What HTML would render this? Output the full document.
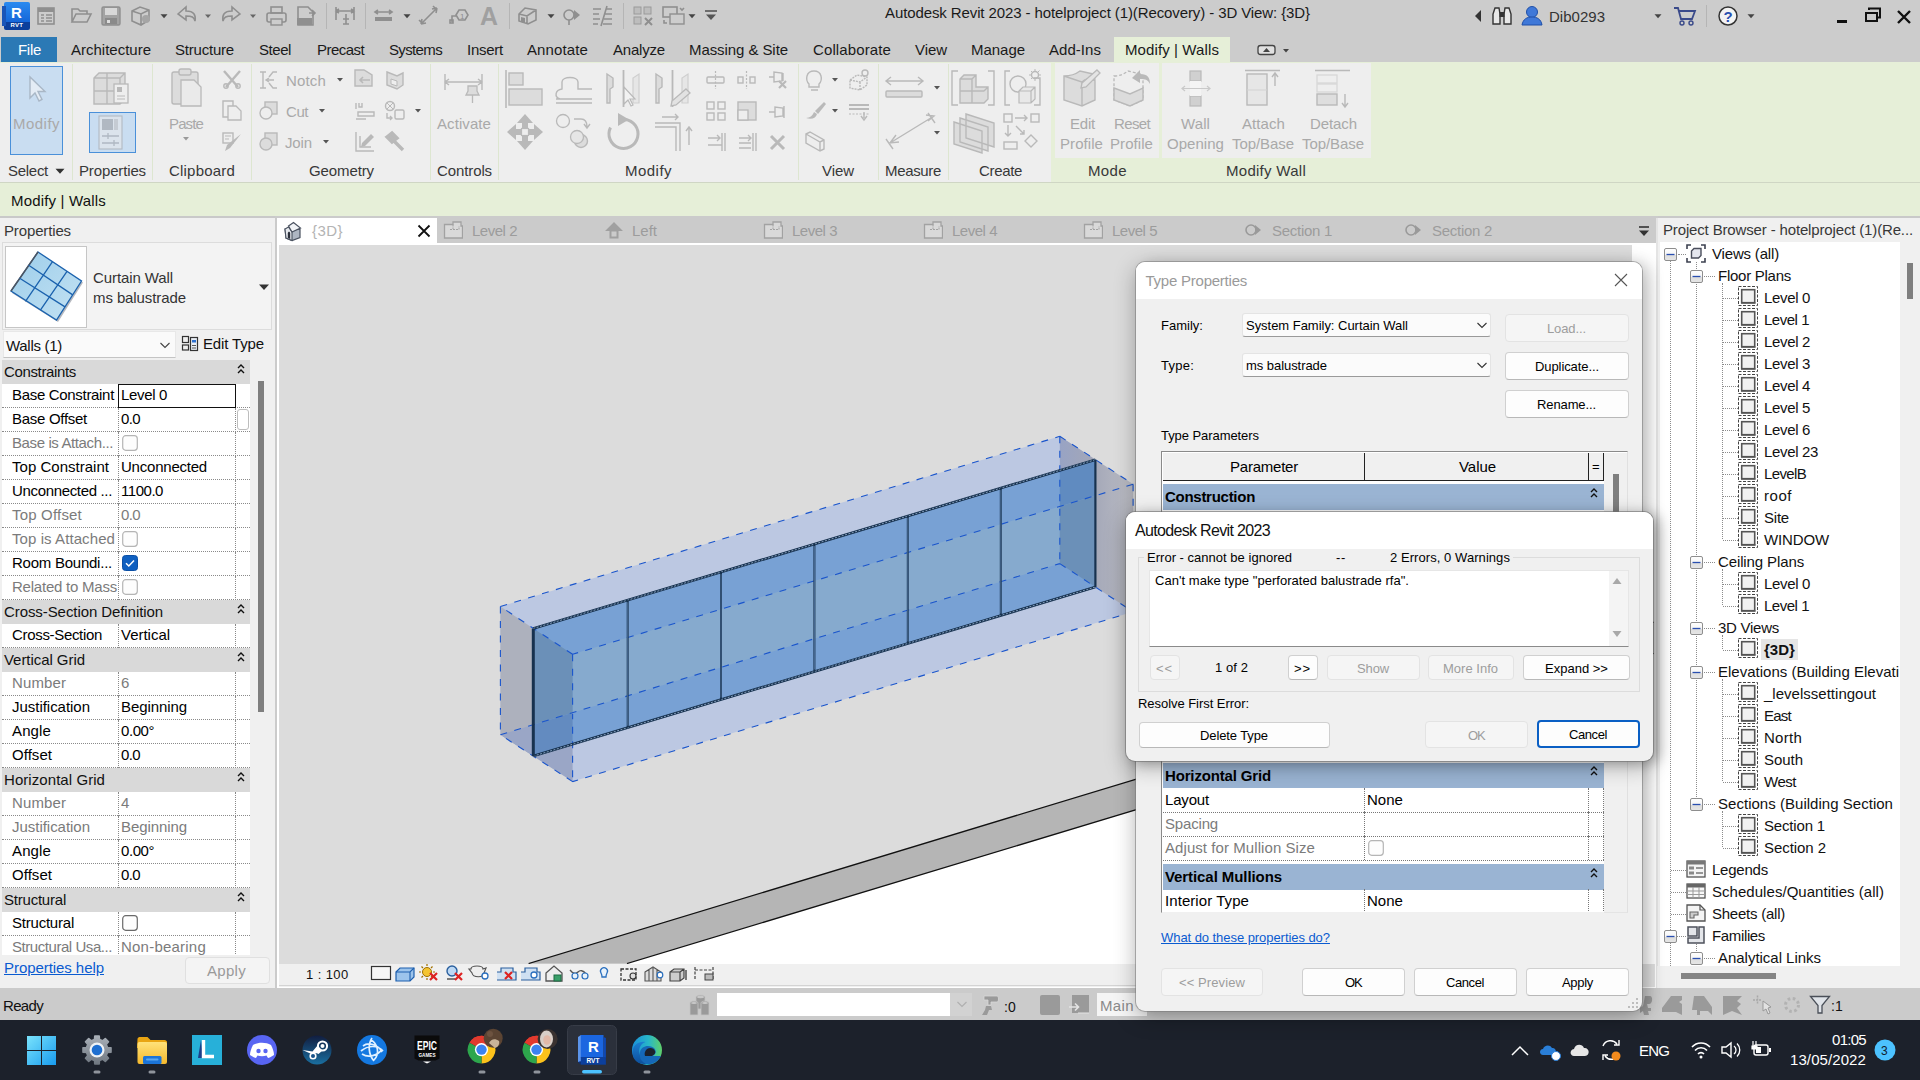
<!DOCTYPE html>
<html><head><meta charset="utf-8"><title>Autodesk Revit 2023</title>
<style>
html,body{margin:0;padding:0;}
body{width:1920px;height:1080px;overflow:hidden;position:relative;background:#cbcbcb;font-family:"Liberation Sans",sans-serif;}
.t{position:absolute;white-space:nowrap;font-family:"Liberation Sans",sans-serif;}
.r{position:absolute;display:block;}
</style></head><body>
<div class="r" style="left:0px;top:0px;width:1920px;height:62px;background:#cccccc;"></div>
<div class="r" style="left:4px;top:2px;width:26px;height:28px;background:linear-gradient(180deg,#2a8af0 0%,#1667d9 70%,#0c3f9c 71%,#0c3f9c 100%);border-radius:2px;"></div>
<div class="r" style="left:2px;top:6px;width:4px;height:20px;background:#1a55b8;"></div>
<span class="t" style="left:11px;top:1.5px;font-size:15px;line-height:21px;color:#fff;font-weight:bold;">R</span>
<span class="t" style="left:10.5px;top:19.0px;font-size:6px;line-height:12px;color:#fff;font-weight:bold;letter-spacing:0.3px;">RVT</span>
<svg class="r" style="left:0px;top:0px;" width="760" height="34" viewBox="0 0 760 34"><rect x="38" y="8" width="16" height="16" fill="none" stroke="#8f8f8f" stroke-width="1.6"/><rect x="38" y="8" width="16" height="4" fill="#8f8f8f"/><path d="M41 15h3M41 18h3M41 21h3M46 15h6M46 18h6M46 21h6" fill="none" stroke="#8f8f8f" stroke-width="1.6" stroke-width="1.2"/><path d="M72 22v-13h6l2 2h7v3M72 22l4-8h15l-4 8z" fill="none" stroke="#8f8f8f" stroke-width="1.6"/><rect x="102" y="7" width="18" height="18" rx="1.5" fill="#a3a3a3" stroke="#8f8f8f" stroke-width="1.4"/><rect x="105" y="8" width="12" height="7" fill="#d8d8d8"/><rect x="105" y="18" width="12" height="6" fill="#8a8a8a"/><rect x="107" y="20" width="3" height="3" fill="#ddd"/><path d="M132 11l8-4 9 3v10l-8 5-9-4z M132 11l9 3 8-4 M141 14v11" fill="none" stroke="#8f8f8f" stroke-width="1.6" stroke-width="1.3"/><circle cx="146" cy="19" r="4" fill="#a5a5a5"/><polygon points="160.5,14.25 167.5,14.25 164,18.25" fill="#444"/><path d="M178 14l8-7v4c8 0 10 4 9 10c-1-4-3-5-9-5v4z" fill="none" stroke="#8f8f8f" stroke-width="1.6" stroke-width="1.4"/><polygon points="205,14.5 211,14.5 208,18.0" fill="#666"/><path d="M240 14l-8-7v4c-8 0-10 4-9 10c1-4 3-5 9-5v4z" fill="none" stroke="#8f8f8f" stroke-width="1.6" stroke-width="1.4"/><polygon points="250,14.5 256,14.5 253,18.0" fill="#666"/><rect x="267" y="13" width="19" height="9" rx="2" fill="none" stroke="#8f8f8f" stroke-width="1.6"/><rect x="271" y="7" width="11" height="6" fill="none" stroke="#8f8f8f" stroke-width="1.6"/><rect x="271" y="19" width="11" height="6" fill="#cdcdcd" stroke="#8f8f8f" stroke-width="1.4"/><path d="M298 25v-18h10l5 5v13z" fill="none" stroke="#8f8f8f" stroke-width="1.6" stroke-width="1.4"/><rect x="297" y="18" width="15" height="7" fill="#8f8f8f"/><path d="M309 13h6m-3-3l3 3-3 3" fill="none" stroke="#8f8f8f" stroke-width="1.6" stroke-width="1.3"/><path d="M326.5 3v26" stroke="#b5b5b5" stroke-width="1"/><path d="M336 7v13M354 7v13M336 11h18M339 9l-3 2 3 2M351 9l3 2-3 2M346 14v10M343 24h6M343 19h6" fill="none" stroke="#8f8f8f" stroke-width="1.6" stroke-width="1.3"/><path d="M365.5 3v26" stroke="#b5b5b5" stroke-width="1"/><path d="M375 12h17M378 10l-3 2 3 2M389 10l3 2-3 2" fill="none" stroke="#8f8f8f" stroke-width="1.6" stroke-width="1.3"/><rect x="375" y="17" width="17" height="4" fill="#8f8f8f"/><polygon points="403.5,14.25 410.5,14.25 407,18.25" fill="#444"/><path d="M421 24l16-16M421 24l1-5M421 24l5-1M437 8l-5 1M437 8l-1 5M419 20l4 4M433 6l4 4" fill="none" stroke="#8f8f8f" stroke-width="1.6" stroke-width="1.3"/><path d="M452 22v-6h4" fill="none" stroke="#8f8f8f" stroke-width="1.6" stroke-width="1.3"/><rect x="450" y="20" width="3" height="3" fill="none" stroke="#8f8f8f" stroke-width="1.6" stroke-width="1"/><path d="M456 15l3-5h6l3 5-3 5h-6z" fill="none" stroke="#8f8f8f" stroke-width="1.6" stroke-width="1.3"/><text x="460" y="18.5" font-size="8" font-family="Liberation Sans" fill="#8f8f8f">1</text><text x="480" y="25" font-size="25" font-weight="bold" font-family="Liberation Sans" fill="#a0a0a0" textLength="18" lengthAdjust="spacingAndGlyphs">A</text><path d="M509.5 3v26" stroke="#b5b5b5" stroke-width="1"/><path d="M519 14l6-6 11 2 0 10-8 4-9-3z M519 14l8 2 9-6 M527 16v8" fill="none" stroke="#8f8f8f" stroke-width="1.6" stroke-width="1.4"/><path d="M521 17v5l4 1v-5z" fill="#8f8f8f"/><polygon points="547.5,14.25 554.5,14.25 551,18.25" fill="#444"/><circle cx="569" cy="15" r="5" fill="none" stroke="#8f8f8f" stroke-width="1.6" stroke-width="1.4"/><path d="M574 10l6 5-6 5z" fill="#8f8f8f"/><path d="M569 20v5" fill="none" stroke="#8f8f8f" stroke-width="1.6" stroke-width="1.3"/><path d="M593 9h8M593 14h6M593 19h7M593 24h5M606 9h6M605 14h7M604 19h8M603 24h9M607 6l-6 20" fill="none" stroke="#8f8f8f" stroke-width="1.6" stroke-width="1.6"/><path d="M623.5 3v26" stroke="#b5b5b5" stroke-width="1"/><rect x="634" y="7" width="7" height="7" fill="#bdbdbd" stroke="#9a9a9a" stroke-width="1"/><rect x="644" y="7" width="7" height="7" fill="#bdbdbd" stroke="#9a9a9a" stroke-width="1"/><rect x="634" y="17" width="7" height="7" fill="#bdbdbd" stroke="#9a9a9a" stroke-width="1"/><path d="M645 18l7 7M652 18l-7 7" stroke="#8f8f8f" stroke-width="2"/><rect x="663" y="7" width="14" height="10" fill="none" stroke="#8f8f8f" stroke-width="1.6" stroke-width="1.4"/><rect x="670" y="14" width="14" height="10" fill="#cdcdcd" stroke="#8f8f8f" stroke-width="1.4"/><path d="M664 20v3h3M680 8l2 2 2-2" fill="none" stroke="#8f8f8f" stroke-width="1.6" stroke-width="1.2"/><polygon points="688.5,14.25 695.5,14.25 692,18.25" fill="#444"/><path d="M705 11h12" stroke="#555" stroke-width="1.6"/><polygon points="706,14.5 716,14.5 711,20.0" fill="#555"/></svg>
<span class="t" style="left:885px;top:2.0px;font-size:15px;line-height:21px;color:#1a1a1a;letter-spacing:-0.104px;">Autodesk Revit 2023 - hotelproject (1)(Recovery) - 3D View: {3D}</span>
<svg class="r" style="left:0px;top:0px;" width="1920" height="34" viewBox="0 0 1920 34"><polygon points="1481,10 1481,22 1475,16" fill="#333"/><path d="M1493 24v-10l2-6h4l1 6v10zM1511 24v-10l-2-6h-4l-1 6v10z" fill="#e8e8e8" stroke="#333" stroke-width="1.4"/><rect x="1499.5" y="12" width="5" height="5" fill="#333"/><circle cx="1532" cy="12" r="5.5" fill="#3f78d8" stroke="#1f4fa8" stroke-width="1"/><path d="M1522 25c1-6 5-8 10-8s9 2 10 8z" fill="#3f78d8" stroke="#1f4fa8" stroke-width="1"/><polygon points="1654.5,14.25 1661.5,14.25 1658,18.25" fill="#444"/><path d="M1674 8h4l3 11h11l3-8h-16" fill="none" stroke="#3a4a8a" stroke-width="1.8"/><circle cx="1682" cy="23" r="2" fill="none" stroke="#3a4a8a" stroke-width="1.4"/><circle cx="1691" cy="23" r="2" fill="none" stroke="#3a4a8a" stroke-width="1.4"/><path d="M1706.5 5v22" stroke="#b5b5b5" stroke-width="1"/><circle cx="1728" cy="16" r="9" fill="#f4f4f4" stroke="#333" stroke-width="1.5"/><text x="1723.5" y="21.5" font-size="15" font-weight="bold" font-family="Liberation Sans" fill="#2b50b0">?</text><polygon points="1747.5,14.25 1754.5,14.25 1751,18.25" fill="#444"/><rect x="1837" y="20" width="10" height="3" fill="#111"/><path d="M1869 10v-1.5h11v9h-2" fill="none" stroke="#111" stroke-width="2"/><rect x="1866" y="13" width="11" height="8" fill="none" stroke="#111" stroke-width="2"/><path d="M1898 11l12 12M1910 11l-12 12" stroke="#111" stroke-width="2.4"/></svg>
<span class="t" style="left:1549px;top:5.5px;font-size:15px;line-height:21px;color:#333;letter-spacing:0.018px;">Dib0293</span>
<div class="r" style="left:1px;top:37px;width:56px;height:25px;background:#2b79b5;"></div>
<span class="t" style="left:18px;top:38.5px;font-size:15px;line-height:21px;color:#fff;letter-spacing:-0.289px;">File</span>
<span class="t" style="left:71px;top:38.5px;font-size:15px;line-height:21px;color:#1a1a1a;letter-spacing:-0.004px;">Architecture</span>
<span class="t" style="left:175px;top:38.5px;font-size:15px;line-height:21px;color:#1a1a1a;letter-spacing:-0.208px;">Structure</span>
<span class="t" style="left:259px;top:38.5px;font-size:15px;line-height:21px;color:#1a1a1a;letter-spacing:-0.438px;">Steel</span>
<span class="t" style="left:317px;top:38.5px;font-size:15px;line-height:21px;color:#1a1a1a;letter-spacing:-0.551px;">Precast</span>
<span class="t" style="left:389px;top:38.5px;font-size:15px;line-height:21px;color:#1a1a1a;letter-spacing:-0.645px;">Systems</span>
<span class="t" style="left:467px;top:38.5px;font-size:15px;line-height:21px;color:#1a1a1a;letter-spacing:-0.255px;">Insert</span>
<span class="t" style="left:527px;top:38.5px;font-size:15px;line-height:21px;color:#1a1a1a;letter-spacing:0.117px;">Annotate</span>
<span class="t" style="left:613px;top:38.5px;font-size:15px;line-height:21px;color:#1a1a1a;letter-spacing:-0.194px;">Analyze</span>
<span class="t" style="left:689px;top:38.5px;font-size:15px;line-height:21px;color:#1a1a1a;letter-spacing:-0.075px;">Massing &amp; Site</span>
<span class="t" style="left:813px;top:38.5px;font-size:15px;line-height:21px;color:#1a1a1a;letter-spacing:0.116px;">Collaborate</span>
<span class="t" style="left:915px;top:38.5px;font-size:15px;line-height:21px;color:#1a1a1a;letter-spacing:-0.059px;">View</span>
<span class="t" style="left:971px;top:38.5px;font-size:15px;line-height:21px;color:#1a1a1a;letter-spacing:-0.036px;">Manage</span>
<span class="t" style="left:1049px;top:38.5px;font-size:15px;line-height:21px;color:#1a1a1a;letter-spacing:0.042px;">Add-Ins</span>
<div class="r" style="left:1114px;top:37px;width:116px;height:25px;background:#e6efd8;"></div>
<span class="t" style="left:1125px;top:38.5px;font-size:15px;line-height:21px;color:#1a1a1a;letter-spacing:0.106px;">Modify | Walls</span>
<svg class="r" style="left:1255px;top:40px;" width="40" height="20" viewBox="0 0 40 20"><rect x="3" y="5.5" width="17" height="9" rx="2.5" fill="#e0e0e0" stroke="#444" stroke-width="1.3"/><polygon points="8,12 15,12 11.5,8" fill="#444"/><polygon points="28,9.0 34,9.0 31,12.5" fill="#444"/></svg>
<div class="r" style="left:0px;top:62px;width:1920px;height:121px;background:#e6efd8;"></div>
<div class="r" style="left:0px;top:63px;width:1051px;height:119px;background:#eeeeee;"></div>
<div class="r" style="left:1055px;top:63px;width:104px;height:95px;background:#eeeeee;"></div>
<div class="r" style="left:1162px;top:63px;width:209px;height:95px;background:#eeeeee;"></div>
<div class="r" style="left:0px;top:182px;width:1920px;height:1px;background:#cfd6c4;"></div>
<div class="r" style="left:0px;top:183px;width:1920px;height:33px;background:#e6efd8;"></div>
<div class="r" style="left:0px;top:216px;width:1920px;height:2px;background:#c9c9c9;"></div>
<span class="t" style="left:11px;top:190.0px;font-size:15px;line-height:21px;color:#111;letter-spacing:0.177px;">Modify | Walls</span>
<div class="r" style="left:72px;top:64px;width:1px;height:116px;background:#dde6d0;"></div>
<div class="r" style="left:152px;top:64px;width:1px;height:116px;background:#dde6d0;"></div>
<div class="r" style="left:251px;top:64px;width:1px;height:116px;background:#dde6d0;"></div>
<div class="r" style="left:430px;top:64px;width:1px;height:116px;background:#dde6d0;"></div>
<div class="r" style="left:498px;top:64px;width:1px;height:116px;background:#dde6d0;"></div>
<div class="r" style="left:798px;top:64px;width:1px;height:116px;background:#dde6d0;"></div>
<div class="r" style="left:878px;top:64px;width:1px;height:116px;background:#dde6d0;"></div>
<div class="r" style="left:948px;top:64px;width:1px;height:116px;background:#dde6d0;"></div>
<div class="r" style="left:10px;top:66px;width:53px;height:89px;background:#c9ddf1;border:1px solid #4a90d9;box-sizing:border-box;"></div>
<div class="r" style="left:89px;top:112px;width:47px;height:41px;background:#c9ddf1;border:1px solid #4a90d9;box-sizing:border-box;"></div>
<svg class="r" style="left:0px;top:62px;" width="1400" height="100" viewBox="0 62 1400 100"><path d="M30 77v21l5-5 4 8 3-1.5-4-8h7z" fill="#e4ecf5" stroke="#a9b7c6" stroke-width="1.4"/><path d="M94 78l5-5h26v26l-5 5h-26z M94 78h26v26 M120 78l5-5 M107 73v31 M94 91h31" fill="#dcdcdc" stroke="#b9b9b9" stroke-width="1.4" stroke-width="1.3"/><rect x="114" y="84" width="14" height="19" fill="#eee" stroke="#b9b9b9" stroke-width="1.3"/><rect x="117" y="87" width="5" height="5" fill="#b9b9b9"/><path d="M117 96h8M117 99h8" stroke="#b9b9b9" stroke-width="1.2"/><rect x="99" y="116" width="23" height="33" fill="#dbe3ec" stroke="#b4bcc6" stroke-width="1.2"/><rect x="102" y="119" width="11" height="11" fill="#b0b8c2"/><rect x="114" y="119" width="4" height="11" fill="#c5cbd3"/><path d="M102 136h17M102 143h17M108 133v6M114 140v6" stroke="#b0b8c2" stroke-width="1.3"/><rect x="172" y="72" width="26" height="32" rx="2" fill="#dcdcdc" stroke="#b9b9b9" stroke-width="1.4"/><rect x="179" y="69" width="12" height="6" rx="2" fill="#dcdcdc" stroke="#b9b9b9" stroke-width="1.4"/><path d="M181 80h13l7 7v19h-20z" fill="#eaeaea" stroke="#b9b9b9" stroke-width="1.3"/><polygon points="183,137.0 189,137.0 186,140.5" fill="#9a9a9a"/><path d="M224 71l14 16M240 71l-14 16" stroke="#b9b9b9" stroke-width="2.4"/><circle cx="226" cy="86" r="2.2" fill="none" stroke="#b9b9b9" stroke-width="1.4"/><circle cx="238" cy="86" r="2.2" fill="none" stroke="#b9b9b9" stroke-width="1.4"/><path d="M223 101h10v16h-10z" fill="none" stroke="#b9b9b9" stroke-width="1.4"/><path d="M228 106h8l5 5v9h-13z" fill="#eee" stroke="#b9b9b9" stroke-width="1.3"/><rect x="223" y="133" width="10" height="10" fill="none" stroke="#b9b9b9" stroke-width="1.4"/><path d="M225 136h6M225 139h4" stroke="#b9b9b9" stroke-width="1"/><path d="M241 134l-11 14-5 3 2-6z" fill="#b9b9b9"/><path d="M260 72h6M260 88h6M263 72v16M277 72h-4l-4 5M277 88h-4l-4-5M266 80h8M269 78l-3 2 3 2" fill="none" stroke="#b9b9b9" stroke-width="1.4" stroke-width="1.6"/><polygon points="337,78.0 343,78.0 340,81.5" fill="#555"/><rect x="265" y="102" width="12" height="12" fill="#dcdcdc" stroke="#b9b9b9" stroke-width="1.4"/><circle cx="266" cy="113" r="6" fill="#eee" stroke="#b9b9b9" stroke-width="1.4"/><polygon points="319,109.0 325,109.0 322,112.5" fill="#555"/><rect x="265" y="133" width="12" height="12" fill="#dcdcdc" stroke="#b9b9b9" stroke-width="1.4"/><circle cx="266" cy="144" r="6" fill="#dcdcdc" stroke="#b9b9b9" stroke-width="1.4"/><polygon points="323,140.0 329,140.0 326,143.5" fill="#555"/><path d="M355 70h9l8 5v11l-8 0h-9z" fill="#dcdcdc" stroke="#b9b9b9" stroke-width="1.4"/><path d="M360 80h10M363 77l-3 3 3 3" stroke="#b9b9b9" stroke-width="1.6" fill="none"/><path d="M387 72l10 4 6-3v12l-6 4-10-4z" fill="#dcdcdc" stroke="#b9b9b9" stroke-width="1.4"/><path d="M391 79l6 2v5l-6-2z" fill="#eee" stroke="#b9b9b9" stroke-width="1"/><path d="M356 103v6M359 103v4h3v-4M358 112h16v4h-16zM356 119h10" fill="none" stroke="#b9b9b9" stroke-width="1.4" stroke-width="1.2"/><circle cx="390" cy="106" r="4.5" fill="none" stroke="#b9b9b9" stroke-width="1.4"/><path d="M387 103l6 6M393 103l-6 6" stroke="#b9b9b9" stroke-width="1"/><rect x="395" y="110" width="9" height="9" rx="1.5" fill="none" stroke="#b9b9b9" stroke-width="1.4"/><path d="M387 113v5h5m-2-2l2 2-2 2" fill="none" stroke="#b9b9b9" stroke-width="1.4" stroke-width="1.2"/><polygon points="415,109.0 421,109.0 418,112.5" fill="#555"/><path d="M356 132v19h18M360 136v11h11" fill="none" stroke="#b9b9b9" stroke-width="1.4"/><path d="M371 134l3 3-9 9-4 1 1-4z" fill="#b9b9b9"/><path d="M387 137l5-4 5 5-5 4z M393 140l10 10" stroke="#b9b9b9" stroke-width="3.4" fill="#b9b9b9"/><path d="M445 74v16M482 74v16M445 82h37M449 79l-4 3 4 3M478 79l4 3-4 3" fill="none" stroke="#b9b9b9" stroke-width="1.4"/><path d="M468 86h9v5l2 4h-13l2-4z M472.5 95v8" fill="#dcdcdc" stroke="#b9b9b9" stroke-width="1.3"/><path d="M506 70v38" stroke="#b9b9b9" stroke-width="1.6"/><rect x="509" y="73" width="14" height="12" fill="#dcdcdc" stroke="#b9b9b9" stroke-width="1.4"/><rect x="509" y="89" width="33" height="16" fill="#dcdcdc" stroke="#b9b9b9" stroke-width="1.4"/><path d="M556 103h36M556 99h36M560 99c-6-2-5-9 2-10v-7c0-6 16-6 16 0v7h14" fill="none" stroke="#b9b9b9" stroke-width="1.4" stroke-width="1.6"/><path d="M623.5 70v37" stroke="#b9b9b9" stroke-width="1.8"/><path d="M607 103v-29l6 4v9l-3 2v14z" fill="#dcdcdc" stroke="#b9b9b9" stroke-width="1.4"/><path d="M639 103v-29l-6 4v25z" fill="#e6e6e6" stroke="#cfcfcf" stroke-width="1.2"/><path d="M624 87v17l4-4 3 6 2-1-3-6h5z" fill="#f2f2f2" stroke="#b9b9b9" stroke-width="1.2"/><path d="M672.500 70v37" stroke="#b9b9b9" stroke-width="1.8"/><path d="M656 103v-29l6 4v9l-3 2v14z" fill="#dcdcdc" stroke="#b9b9b9" stroke-width="1.4"/><path d="M688 103v-29l-6 4v25z" fill="#e6e6e6" stroke="#cfcfcf" stroke-width="1.2"/><path d="M686 89l4 4-14 12-5 1 1-5z" fill="#e2e2e2" stroke="#b9b9b9" stroke-width="1.3"/><path d="M525 114l8 9h-5v5h-6v-5h-5z M525 150l8-9h-5v-5h-6v5h-5z M507 132l9-8v5h5v6h-5v5z M543 132l-9-8v5h-5v6h5v5z" fill="#b9b9b9"/><rect x="521.5" y="128.500" width="7" height="7" fill="#eee" stroke="#b9b9b9" stroke-width="1.2"/><circle cx="563" cy="121" r="6.500" fill="#eee" stroke="#b9b9b9" stroke-width="1.3"/><circle cx="581" cy="141" r="6.500" fill="#dcdcdc" stroke="#b9b9b9" stroke-width="1.4"/><circle cx="577" cy="137" r="6.500" fill="#e6e6e6" stroke="#b9b9b9" stroke-width="1.3"/><path d="M574 119h7c4 0 6 3 6 8m-3-3l3 4 3-4" fill="none" stroke="#b9b9b9" stroke-width="1.4" stroke-width="1.6"/><path d="M625 119.500A14.500 14.500 0 1 1 610.500 127.500" fill="none" stroke="#b9b9b9" stroke-width="3"/><path d="M618 113l11 6.500-11 6.500z" fill="#b9b9b9"/><path d="M655 123h25v28M655 127h21v24M662 117h16m-3-3l3 3-3 3M689 145v-17m-3 3l3-4 3 4" fill="none" stroke="#b9b9b9" stroke-width="1.4" stroke-width="1.5"/><rect x="707" y="77" width="17" height="6" rx="1" fill="none" stroke="#b9b9b9" stroke-width="1.4" stroke-width="1.3"/><path d="M715.500 71v18" stroke="#b9b9b9" stroke-width="1.2" stroke-dasharray="2 1.500"/><rect x="738" y="77" width="5" height="6" fill="none" stroke="#b9b9b9" stroke-width="1.4" stroke-width="1.3"/><rect x="750" y="77" width="5" height="6" fill="none" stroke="#b9b9b9" stroke-width="1.4" stroke-width="1.3"/><path d="M746.500 71v18" stroke="#b9b9b9" stroke-width="1.2" stroke-dasharray="2 1.500"/><path d="M769 77h5M774 72v10l8-1v-8z M783 73v8" fill="none" stroke="#b9b9b9" stroke-width="1.4" stroke-width="1.3"/><path d="M779 81l7 7M786 81l-7 7" stroke="#b9b9b9" stroke-width="2.2"/><rect x="707" y="102" width="7" height="7" fill="none" stroke="#b9b9b9" stroke-width="1.4" stroke-width="1.3"/><rect x="718" y="102" width="7" height="7" fill="none" stroke="#b9b9b9" stroke-width="1.4" stroke-width="1.3"/><rect x="707" y="113" width="7" height="7" fill="none" stroke="#b9b9b9" stroke-width="1.4" stroke-width="1.3"/><rect x="718" y="113" width="7" height="7" fill="none" stroke="#b9b9b9" stroke-width="1.4" stroke-width="1.3"/><rect x="738" y="102" width="18" height="18" fill="#dcdcdc" stroke="#b9b9b9" stroke-width="1.4" stroke-width="1.3"/><rect x="738" y="110" width="10" height="10" fill="#eee" stroke="#b9b9b9" stroke-width="1.3"/><path d="M769 112h6M775 107v10l8-1v-8z M784 106v12" fill="none" stroke="#b9b9b9" stroke-width="1.4" stroke-width="1.3"/><path d="M708 138h12m-3-3l3 3-3 3M708 145h14M722 133v18M725 133v18" fill="none" stroke="#b9b9b9" stroke-width="1.4" stroke-width="1.3"/><path d="M739 138h12m-3-3l3 3-3 3M739 143h12M739 148h12M753 133v18M756 133v18" fill="none" stroke="#b9b9b9" stroke-width="1.4" stroke-width="1.3"/><path d="M771 136l13 13M784 136l-13 13" stroke="#b9b9b9" stroke-width="3"/><path d="M809 84c-4-4-3-13 5-13s9 9 5 13v3h-10z M811 90h7" fill="none" stroke="#b9b9b9" stroke-width="1.4" stroke-width="1.3"/><polygon points="832,78.0 838,78.0 835,81.5" fill="#555"/><path d="M850 80l7-5 10 2v8l-7 5-10-2z M850 80l10 2 7-5 M860 82v8" fill="none" stroke="#b9b9b9" stroke-width="1.4" stroke-width="1.2" stroke-dasharray="2 1"/><circle cx="865" cy="73" r="3" fill="none" stroke="#b9b9b9" stroke-width="1.4" stroke-width="1.2"/><path d="M806 118c4 0 7-3 8-6l3 2c-1 4-5 6-11 4z" fill="#b9b9b9"/><path d="M815 111l9-9 2 2-8 10z" fill="#b9b9b9"/><polygon points="832,109.0 838,109.0 835,112.5" fill="#555"/><path d="M849 105h20M849 109h20" stroke="#b9b9b9" stroke-width="2"/><path d="M849 114h20" stroke="#b9b9b9" stroke-width="1.2" stroke-dasharray="2 1.500"/><path d="M864 112v6m-3-2l3 4 3-4" fill="none" stroke="#b9b9b9" stroke-width="1.4" stroke-width="1.5"/><path d="M806 134l4-2 14 8v9l-4 2-14-8z M806 134l14 8 4-2 M820 142v9" fill="none" stroke="#b9b9b9" stroke-width="1.4" stroke-width="1.3"/><path d="M887 81h35M891 77l-5 4 5 4M918 77l5 4-5 4" fill="none" stroke="#b9b9b9" stroke-width="1.4" stroke-width="1.4"/><rect x="886" y="91" width="36" height="6" rx="1" fill="#dcdcdc" stroke="#b9b9b9" stroke-width="1.4" stroke-width="1.2"/><polygon points="934,86.0 940,86.0 937,89.5" fill="#555"/><path d="M890 143l44-27M886 139l7 10M928 113l7 10M896 135l-6 8 9-1M928 121l6-5-8-1" fill="none" stroke="#b9b9b9" stroke-width="1.4" stroke-width="1.4"/><polygon points="934,131.0 940,131.0 937,134.5" fill="#555"/><path d="M958 71h-6v34h6M988 71h6v34h-6" fill="none" stroke="#b9b9b9" stroke-width="1.4" stroke-width="1.4"/><path d="M960 79l4-4h12v12h12v12l-4 4h-24z M960 79h12v24M972 91h12M972 79l4-4M984 91l4-4M960 91h12" fill="#dcdcdc" stroke="#b9b9b9" stroke-width="1.4" stroke-width="1.2"/><path d="M1010 71h-5v34h5M1034 78h6v27h-6" fill="none" stroke="#b9b9b9" stroke-width="1.4" stroke-width="1.4"/><circle cx="1018" cy="84" r="8" fill="none" stroke="#b9b9b9" stroke-width="1.4" stroke-width="1.3"/><path d="M1019 91l4-4h12v12l-4 4h-12z M1019 91h12v12M1031 91l4-4" fill="#e8e8e8" stroke="#b9b9b9" stroke-width="1.2"/><circle cx="1035" cy="75" r="3.500" fill="none" stroke="#b9b9b9" stroke-width="1.4" stroke-width="1.2"/><path d="M1035 69v2M1035 79v2M1029 75h2M1039 75h2M1031 71l1.5 1.500M1038 78l1.500 1.500M1031 79l1.500-1.500M1038 72l1.500-1.500" stroke="#b9b9b9" stroke-width="1"/><path d="M966 114l28 9v24l-28-9z M960 118l28 9v24l-28-9z M954 122l28 9v22l-28-9z" fill="#dcdcdc" stroke="#b9b9b9" stroke-width="1.4" stroke-width="1.2"/><rect x="1004" y="114" width="8" height="8" fill="none" stroke="#b9b9b9" stroke-width="1.4" stroke-width="1.2"/><rect x="1031" y="114" width="8" height="8" fill="none" stroke="#b9b9b9" stroke-width="1.4" stroke-width="1.2"/><rect x="1004" y="142" width="13" height="7" fill="none" stroke="#b9b9b9" stroke-width="1.4" stroke-width="1.2"/><path d="M1031 135l6 6-6 6-6-6z" fill="none" stroke="#b9b9b9" stroke-width="1.4" stroke-width="1.2"/><path d="M1015 118h12m-3-3l3 3-3 3M1008 125v11m-3-3l3 3 3-3M1016 126l8 8m0-4v4h-4" fill="none" stroke="#b9b9b9" stroke-width="1.4" stroke-width="1.3"/><path d="M1064 76c8 0 12-2 16-5l13 3c2 2 2 6 2 8v18l-13 6-18-6z M1064 76l18 6c0 8 0 16 0 24 M1082 82c3-3 8-5 13-1" fill="#dcdcdc" stroke="#b9b9b9" stroke-width="1.4" stroke-width="1.3"/><path d="M1097 70l3 3-14 14-5 1 1-5z" fill="#e4e4e4" stroke="#b9b9b9" stroke-width="1.3"/><path d="M1114 76c6 0 10-2 14-5l13 3c2 2 2 6 2 8v18l-13 6-16-6z" fill="none" stroke="#b9b9b9" stroke-width="1.3" stroke-dasharray="3 2"/><path d="M1114 88l16 6 13-6v12l-13 6-16-6z" fill="#dcdcdc" stroke="#b9b9b9" stroke-width="1.4" stroke-width="1.2"/><path d="M1132 78l8-8v4c8 0 10 4 10 10c-2-4-4-5-10-5v4z" fill="#b9b9b9"/><rect x="1190" y="71" width="11" height="10" fill="#d0d0d0" stroke="#b9b9b9" stroke-width="1.2"/><rect x="1190" y="96" width="11" height="10" fill="#d0d0d0" stroke="#b9b9b9" stroke-width="1.2"/><rect x="1190" y="81" width="11" height="15" fill="#f4f4f4"/><path d="M1182 88.500h28M1185 86l-3 2.500 3 2.500M1207 86l3 2.500-3 2.500" stroke="#c9c9c9" stroke-width="1.2" fill="none"/><path d="M1245 70.500h35" stroke="#b9b9b9" stroke-width="1.6"/><rect x="1247" y="74" width="20" height="31" fill="#e6e6e6" stroke="#b9b9b9" stroke-width="1.4"/><path d="M1247 90h20" stroke="#d2d2d2" stroke-width="1"/><path d="M1275 86v-12m-3 3l3-4 3 4" fill="none" stroke="#b9b9b9" stroke-width="1.4" stroke-width="1.5"/><path d="M1315 70.500h35" stroke="#b9b9b9" stroke-width="1.6"/><rect x="1317" y="75" width="20" height="8" fill="none" stroke="#d6d6d6" stroke-width="1.2"/><rect x="1317" y="84" width="20" height="8" fill="none" stroke="#d6d6d6" stroke-width="1.2"/><rect x="1317" y="94" width="20" height="11" fill="#dedede" stroke="#b9b9b9" stroke-width="1.4"/><path d="M1345 94v12m-3-3l3 4 3-4" fill="none" stroke="#b9b9b9" stroke-width="1.4" stroke-width="1.5"/></svg>
<span class="t" style="left:13px;top:112.5px;font-size:15px;line-height:21px;color:#a9a9a9;letter-spacing:0.469px;">Modify</span>
<span class="t" style="left:169px;top:112.5px;font-size:15px;line-height:21px;color:#a9a9a9;letter-spacing:-0.872px;">Paste</span>
<span class="t" style="left:286px;top:69.5px;font-size:15px;line-height:21px;color:#a9a9a9;letter-spacing:0.163px;">Notch</span>
<span class="t" style="left:286px;top:100.5px;font-size:15px;line-height:21px;color:#a9a9a9;letter-spacing:-0.448px;">Cut</span>
<span class="t" style="left:285px;top:131.5px;font-size:15px;line-height:21px;color:#a9a9a9;letter-spacing:-0.129px;">Join</span>
<span class="t" style="left:437px;top:112.5px;font-size:15px;line-height:21px;color:#a9a9a9;letter-spacing:0.080px;">Activate</span>
<span class="t" style="left:1070px;top:112.5px;font-size:15px;line-height:21px;color:#a9a9a9;letter-spacing:-0.211px;">Edit</span>
<span class="t" style="left:1060px;top:132.5px;font-size:15px;line-height:21px;color:#a9a9a9;letter-spacing:0.069px;">Profile</span>
<span class="t" style="left:1114px;top:112.5px;font-size:15px;line-height:21px;color:#a9a9a9;letter-spacing:-0.637px;">Reset</span>
<span class="t" style="left:1110px;top:132.5px;font-size:15px;line-height:21px;color:#a9a9a9;letter-spacing:0.069px;">Profile</span>
<span class="t" style="left:1181px;top:112.5px;font-size:15px;line-height:21px;color:#a9a9a9;letter-spacing:0.102px;">Wall</span>
<span class="t" style="left:1167px;top:132.5px;font-size:15px;line-height:21px;color:#a9a9a9;letter-spacing:0.040px;">Opening</span>
<span class="t" style="left:1242px;top:112.5px;font-size:15px;line-height:21px;color:#a9a9a9;letter-spacing:0.078px;">Attach</span>
<span class="t" style="left:1232px;top:132.5px;font-size:15px;line-height:21px;color:#a9a9a9;letter-spacing:-0.068px;">Top/Base</span>
<span class="t" style="left:1310px;top:112.5px;font-size:15px;line-height:21px;color:#a9a9a9;letter-spacing:-0.089px;">Detach</span>
<span class="t" style="left:1302px;top:132.5px;font-size:15px;line-height:21px;color:#a9a9a9;letter-spacing:-0.068px;">Top/Base</span>
<span class="t" style="left:8px;top:160.0px;font-size:15px;line-height:21px;color:#383838;letter-spacing:-0.281px;">Select</span>
<svg class="r" style="left:52px;top:165px;" width="16" height="12" viewBox="0 0 16 12"><polygon points="3.5,3.75 12.5,3.75 8,8.75" fill="#333"/></svg>
<span class="t" style="left:79px;top:160.0px;font-size:15px;line-height:21px;color:#383838;letter-spacing:-0.138px;">Properties</span>
<span class="t" style="left:169px;top:160.0px;font-size:15px;line-height:21px;color:#383838;letter-spacing:0.200px;">Clipboard</span>
<span class="t" style="left:309px;top:160.0px;font-size:15px;line-height:21px;color:#383838;letter-spacing:-0.109px;">Geometry</span>
<span class="t" style="left:437px;top:160.0px;font-size:15px;line-height:21px;color:#383838;letter-spacing:-0.107px;">Controls</span>
<span class="t" style="left:625px;top:160.0px;font-size:15px;line-height:21px;color:#383838;letter-spacing:0.469px;">Modify</span>
<span class="t" style="left:822px;top:160.0px;font-size:15px;line-height:21px;color:#383838;letter-spacing:-0.059px;">View</span>
<span class="t" style="left:885px;top:160.0px;font-size:15px;line-height:21px;color:#383838;letter-spacing:-0.339px;">Measure</span>
<span class="t" style="left:979px;top:160.0px;font-size:15px;line-height:21px;color:#383838;letter-spacing:-0.339px;">Create</span>
<span class="t" style="left:1088px;top:160.0px;font-size:15px;line-height:21px;color:#383838;letter-spacing:0.367px;">Mode</span>
<span class="t" style="left:1226px;top:160.0px;font-size:15px;line-height:21px;color:#383838;letter-spacing:0.277px;">Modify Wall</span>
<div class="r" style="left:275px;top:216px;width:1383px;height:772px;background:#cbcbcb;"></div>
<div class="r" style="left:277px;top:243px;width:1379px;height:745px;background:#ffffff;"></div>
<div class="r" style="left:277px;top:218px;width:160px;height:27px;background:#ffffff;"></div>
<svg class="r" style="left:282px;top:220px;" width="22" height="22" viewBox="0 0 22 22"><path d="M3 9l1 9 6 2.500 8-3v-8z" fill="#aeb6c2" stroke="#4a5260" stroke-width="1.200"/><path d="M3 9l1 9 6 2.500v-8.500l-3.500-5z" fill="#e6e9ee" stroke="#4a5260" stroke-width="1.100"/><path d="M6.500 6l5-3.500 7 5.500-8.500 4z" fill="#f1f3f6" stroke="#4a5260" stroke-width="1.200"/><path d="M5.800 13.500c0-2.500 2.400-2.500 2.400 0v5.500l-2.400-1z" fill="#2a2f3a"/></svg>
<span class="t" style="left:312px;top:220.0px;font-size:15px;line-height:21px;color:#b4b4b4;letter-spacing:0.449px;">{3D}</span>
<svg class="r" style="left:416px;top:223px;" width="16" height="16" viewBox="0 0 16 16"><path d="M2.500 2.500l11 11M13.500 2.500l-11 11" stroke="#111" stroke-width="1.8"/></svg>
<svg class="r" style="left:443px;top:220px;" width="20" height="20" viewBox="0 0 20 20"><path d="M1.500 4.500h8.500v-2.500h8v4h1.500v12h-18z" fill="#d9d9d9" stroke="#a2a2a2" stroke-width="1.300"/><path d="M10 4.500v4.500M7 9.500h9M16 9.500v-3.500" stroke="#a2a2a2" stroke-width="1" stroke-dasharray="2 1" fill="none"/></svg>
<span class="t" style="left:472px;top:220.0px;font-size:15px;line-height:21px;color:#9c9c9c;letter-spacing:-0.482px;">Level 2</span>
<svg class="r" style="left:604px;top:220px;" width="20" height="20" viewBox="0 0 20 20"><path d="M10 2l9 9h-4.500v7.500h-9v-7.500h-4.500z" fill="#a0a0a0"/><rect x="7.500" y="11.500" width="5" height="5" fill="#cbcbcb"/></svg>
<span class="t" style="left:632px;top:220.0px;font-size:15px;line-height:21px;color:#9c9c9c;letter-spacing:-0.008px;">Left</span>
<svg class="r" style="left:763px;top:220px;" width="20" height="20" viewBox="0 0 20 20"><path d="M1.500 4.500h8.500v-2.500h8v4h1.500v12h-18z" fill="#d9d9d9" stroke="#a2a2a2" stroke-width="1.300"/><path d="M10 4.500v4.500M7 9.500h9M16 9.500v-3.500" stroke="#a2a2a2" stroke-width="1" stroke-dasharray="2 1" fill="none"/></svg>
<span class="t" style="left:792px;top:220.0px;font-size:15px;line-height:21px;color:#9c9c9c;letter-spacing:-0.482px;">Level 3</span>
<svg class="r" style="left:923px;top:220px;" width="20" height="20" viewBox="0 0 20 20"><path d="M1.500 4.500h8.500v-2.500h8v4h1.500v12h-18z" fill="#d9d9d9" stroke="#a2a2a2" stroke-width="1.300"/><path d="M10 4.500v4.500M7 9.500h9M16 9.500v-3.500" stroke="#a2a2a2" stroke-width="1" stroke-dasharray="2 1" fill="none"/></svg>
<span class="t" style="left:952px;top:220.0px;font-size:15px;line-height:21px;color:#9c9c9c;letter-spacing:-0.482px;">Level 4</span>
<svg class="r" style="left:1083px;top:220px;" width="20" height="20" viewBox="0 0 20 20"><path d="M1.500 4.500h8.500v-2.500h8v4h1.500v12h-18z" fill="#d9d9d9" stroke="#a2a2a2" stroke-width="1.300"/><path d="M10 4.500v4.500M7 9.500h9M16 9.500v-3.500" stroke="#a2a2a2" stroke-width="1" stroke-dasharray="2 1" fill="none"/></svg>
<span class="t" style="left:1112px;top:220.0px;font-size:15px;line-height:21px;color:#9c9c9c;letter-spacing:-0.482px;">Level 5</span>
<svg class="r" style="left:1243px;top:220px;" width="20" height="20" viewBox="0 0 20 20"><circle cx="8" cy="10" r="5" fill="none" stroke="#9a9a9a" stroke-width="1.6"/><path d="M12 5l6 5-6 5z" fill="#9a9a9a"/></svg>
<span class="t" style="left:1272px;top:220.0px;font-size:15px;line-height:21px;color:#9c9c9c;letter-spacing:-0.283px;">Section 1</span>
<svg class="r" style="left:1403px;top:220px;" width="20" height="20" viewBox="0 0 20 20"><circle cx="8" cy="10" r="5" fill="none" stroke="#9a9a9a" stroke-width="1.6"/><path d="M12 5l6 5-6 5z" fill="#9a9a9a"/></svg>
<span class="t" style="left:1432px;top:220.0px;font-size:15px;line-height:21px;color:#9c9c9c;letter-spacing:-0.283px;">Section 2</span>
<svg class="r" style="left:1637px;top:224px;" width="14" height="14" viewBox="0 0 14 14"><path d="M2 3h10" stroke="#333" stroke-width="1.600"/><polygon points="2,6.500 12,6.500 7,12" fill="#333"/></svg>
<svg class="r" style="left:279px;top:245px" width="1375" height="719" viewBox="279 245 1375 719"><rect x="279" y="245" width="1376" height="719" fill="#dcdcdc"/><rect x="1632" y="245" width="24" height="719" fill="#ffffff"/><polygon points="627.0,963.5 1660.0,651.5 1660.0,975.0 627.0,975.0" fill="#ffffff"/><polygon points="528.6,963.5 1660.0,620.3 1660.0,651.5 627.0,963.5" fill="#b5b5b5"/><path d="M528.6 963.5L1660 620.3M627 963.5L1660 651.5" stroke="#111" stroke-width="1.300"/><polygon points="500.4,606.5 1059.8,436.3 1133.1,484.2 1133.1,611.8 572.6,781.6 500.4,734.8" fill="#bcc8e2"/><polygon points="500.4,606.5 533.3,628.5 533.3,756.1 500.4,734.8" fill="#adb1bd"/><defs><linearGradient id="rf" x1="0" y1="0" x2="1" y2="0"><stop offset="0" stop-color="#98a3c4"/><stop offset="0.45" stop-color="#a3a7b8"/><stop offset="1" stop-color="#bcbdc4"/></linearGradient></defs><polygon points="1059.8,436.3 1133.1,484.2 1133.1,611.8 1059.8,563.6" fill="url(#rf)"/><polygon points="500.4,734.8 533.3,724.7 533.3,756.1 572.6,744.3 572.6,781.6" fill="#9aa6c6"/><polygon points="533.3,628.5 1095.4,459.7 1095.4,587.0 533.3,756.1" fill="#78a1d4"/><polygon points="572.6,654.3 1059.8,506.4 1059.8,563.6 572.6,712.7" fill="#86aace"/><polygon points="533.3,628.5 572.6,654.3 572.6,712.7 533.3,724.7" fill="#6b90b8"/><polygon points="533.3,724.7 572.6,712.7 572.6,744.3 533.3,756.1" fill="#638bc0"/><polygon points="1059.8,470.4 1095.4,459.7 1095.4,495.6 1059.8,506.4" fill="#608bc0"/><polygon points="1059.8,506.4 1095.4,495.6 1095.4,587.0 1059.8,563.6" fill="#6b90b8"/><path d="M500.4 606.5L1059.8 436.3M1059.8 436.3L1133.1 484.2M1133.1 484.2L572.6 654.3M572.6 654.3L500.4 606.5M500.4 734.8L1059.8 563.6M1059.8 563.6L1133.1 611.8M1133.1 611.8L572.6 781.6M572.6 781.6L500.4 734.8M500.4 606.5L500.4 734.8M1059.8 436.3L1059.8 563.6M1133.1 484.2L1133.1 611.8M572.6 654.3L572.6 781.6" stroke="#1a55cc" stroke-width="1.100" stroke-dasharray="7 7.500" fill="none"/><path d="M533.3 628.5L1095.4 459.7M533.3 756.1L1095.4 587.0" stroke="#17324f" stroke-width="2.600" fill="none"/><path d="M533.3 628.5L1095.4 459.7M533.3 756.1L1095.4 587.0" stroke="#9fb9d8" stroke-width="0.800" stroke-dasharray="2 1.500" fill="none"/><path d="M533.3 628.5L533.3 756.1" stroke="#17324f" stroke-width="3" fill="none"/><path d="M1095.4 459.7L1095.4 587.0" stroke="#17324f" stroke-width="2.200" fill="none"/><path d="M627.7 600.2V727.7" stroke="#17324f" stroke-width="2" fill="none"/><path d="M627.7 602.2V725.7" stroke="#6f96c6" stroke-width="0.600" fill="none"/><path d="M721 572.1V699.6" stroke="#17324f" stroke-width="2" fill="none"/><path d="M721 574.1V697.6" stroke="#6f96c6" stroke-width="0.600" fill="none"/><path d="M814.4 544.1V671.5" stroke="#17324f" stroke-width="2" fill="none"/><path d="M814.4 546.1V669.5" stroke="#6f96c6" stroke-width="0.600" fill="none"/><path d="M907.8 516.0V643.4" stroke="#17324f" stroke-width="2" fill="none"/><path d="M907.8 518.0V641.4" stroke="#6f96c6" stroke-width="0.600" fill="none"/><path d="M1000.8 488.1V615.5" stroke="#17324f" stroke-width="2" fill="none"/><path d="M1000.8 490.1V613.5" stroke="#6f96c6" stroke-width="0.600" fill="none"/></svg>
<div class="r" style="left:279px;top:964px;width:1375px;height:23px;background:#f0f0f0;"></div>
<div class="r" style="left:279px;top:985px;width:1375px;height:1px;background:#d4d4d4;"></div>
<span class="t" style="left:306px;top:965.0px;font-size:13px;line-height:19px;color:#111;letter-spacing:0.319px;letter-spacing:0.400px;">1 : 100</span>
<svg class="r" style="left:360px;top:962px" width="370" height="24" viewBox="360 962 370 24"><rect x="371.500" y="966.500" width="19" height="13" fill="#f6f6f6" stroke="#333" stroke-width="1.200"/><path d="M396 972l4-4h14v9l-4 4h-14z" fill="#9cc4ec" stroke="#1d5fae" stroke-width="1.200"/><path d="M396 972h14l4-4M410 972v9" fill="none" stroke="#1d5fae" stroke-width="1.100"/><circle cx="427" cy="972" r="4.500" fill="#f4c430" stroke="#a07000" stroke-width="1"/><path d="M427 964v2M427 978v2M419 972h2M433 972h2M421.500 966.500l1.500 1.500M431 976l1.500 1.500M421.500 977.500l1.500-1.500M431 968l1.500-1.500" stroke="#a07000" stroke-width="1.200"/><path d="M430 973l7 7M437 973l-7 7" stroke="#d22" stroke-width="2.200"/><circle cx="452" cy="971" r="5" fill="#bcd8f4" stroke="#2a5f9e" stroke-width="1.400"/><path d="M447 979h8" stroke="#555" stroke-width="1.500"/><path d="M455 973l7 7M462 973l-7 7" stroke="#d22" stroke-width="2.200"/><path d="M471 969c0-4 12-4 12 0l3-1-2 5c0 5-11 5-12 0l-3-4z" fill="#eee" stroke="#555" stroke-width="1.200"/><circle cx="485" cy="976" r="3" fill="#fff" stroke="#2a6fbe" stroke-width="1.300"/><path d="M497 972h4v-4h12v4h3v8h-19" fill="#cfe0f2" stroke="#2a5f9e" stroke-width="1.200"/><path d="M505 972l7 7M512 972l-7 7" stroke="#d22" stroke-width="2.200"/><path d="M521 972h4v-4h12v4h3v8h-19" fill="#cfe0f2" stroke="#2a5f9e" stroke-width="1.200"/><circle cx="534" cy="975" r="3" fill="#fff" stroke="#2a6fbe" stroke-width="1.300"/><path d="M546 973l8-7 8 7v8h-16z" fill="#eee" stroke="#555" stroke-width="1.300"/><rect x="554" y="975" width="7" height="6" fill="#3aa06a" stroke="#1d6b43" stroke-width="1"/><path d="M570 970c3 4 6 4 8 2s5-2 8 2" fill="none" stroke="#555" stroke-width="1.300"/><circle cx="575" cy="976" r="3" fill="#e8f2fb" stroke="#2a6fbe" stroke-width="1.200"/><circle cx="585" cy="976" r="3" fill="#e8f2fb" stroke="#2a6fbe" stroke-width="1.200"/><path d="M601 973a3.500 3.500 0 1 1 6 0c-1 2-1 3-1 4h-4c0-1 0-2-1-4z" fill="#e8f2fb" stroke="#2a6fbe" stroke-width="1.300"/><rect x="621" y="969" width="15" height="11" fill="#eee" stroke="#333" stroke-width="1.300" stroke-dasharray="3 1.500"/><circle cx="633" cy="976" r="3" fill="#ddd" stroke="#333" stroke-width="1.100"/><path d="M645 972l8-5 8 5v9h-16z M649 970v11M653 968v13M657 970v11" fill="#ddd" stroke="#555" stroke-width="1.100"/><circle cx="660" cy="975" r="2.800" fill="#fff" stroke="#2a6fbe" stroke-width="1.200"/><path d="M670 972l4-3h10v9l-4 3h-10z M670 972h10v9M680 972l4-3" fill="#ccc" stroke="#444" stroke-width="1.200"/><path d="M686 970v10" stroke="#444" stroke-width="1.400"/><path d="M695 967v13M713 967v13M695 970h18" fill="none" stroke="#444" stroke-width="1.200" stroke-dasharray="3 1.500"/><rect x="705" y="974" width="8" height="6" fill="#bbb" stroke="#444" stroke-width="1"/></svg>
<div class="r" style="left:1642px;top:964px;width:13px;height:23px;background:#e2e2e2;"></div>
<div class="r" style="left:0px;top:218px;width:275px;height:770px;background:#f0f0f0;"></div>
<span class="t" style="left:4px;top:220.0px;font-size:15px;line-height:21px;color:#383838;letter-spacing:-0.138px;">Properties</span>
<div class="r" style="left:2px;top:242px;width:270px;height:88px;background:#f3f3f3;border:1px solid #dcdcdc;box-sizing:border-box;"></div>
<div class="r" style="left:5px;top:246px;width:82px;height:82px;background:#ffffff;border:1px solid #c6c6c6;box-sizing:border-box;"></div>
<svg class="r" style="left:0px;top:240px;" width="95" height="95" viewBox="0 240 95 95"><defs><linearGradient id="cw" x1="0" y1="0" x2="1" y2="1"><stop offset="0" stop-color="#9ccdea"/><stop offset="1" stop-color="#c4e2f3"/></linearGradient></defs>
    <polygon points="39.500,253 83,282.500 58,322 12,293" fill="#b4b8bf"/>
    <polygon points="38,252 81.500,281 56.500,320 11,291" fill="url(#cw)" stroke="#1b62ae" stroke-width="1.300"/>
    <path d="M38 252L11 291" stroke="#4d5560" stroke-width="1.500"/>
    <path d="M28.700 265.300l44 29.600M19.700 278.300l45.300 28.600M52.500 261.700l-27 39.600M67 271.400l-26.600 38.800" stroke="#1b62ae" stroke-width="1.300" fill="none"/></svg>
<span class="t" style="left:93px;top:267.0px;font-size:15px;line-height:21px;color:#333;letter-spacing:-0.094px;">Curtain Wall</span>
<span class="t" style="left:93px;top:287.0px;font-size:15px;line-height:21px;color:#333;letter-spacing:-0.095px;">ms balustrade</span>
<svg class="r" style="left:258px;top:283px;" width="12" height="8" viewBox="0 0 12 8"><polygon points="1,1.500 11,1.500 6,7" fill="#333"/></svg>
<div class="r" style="left:3px;top:331px;width:173px;height:27px;background:#fafafa;border:1px solid #e8e8e8;border-bottom:1px solid #c4c4c4;box-sizing:border-box;"></div>
<span class="t" style="left:6px;top:335.0px;font-size:15px;line-height:21px;color:#111;letter-spacing:-0.290px;">Walls (1)</span>
<svg class="r" style="left:159px;top:341px;" width="12" height="9" viewBox="0 0 12 9"><path d="M1.500 2l4.500 4.500 4.500-4.500" fill="none" stroke="#444" stroke-width="1.1"/></svg>
<svg class="r" style="left:181px;top:335px;" width="18" height="18" viewBox="0 0 18 18"><rect x="1.500" y="1.500" width="6" height="6" fill="none" stroke="#333" stroke-width="1.200"/><rect x="1.500" y="10" width="6" height="5" fill="none" stroke="#333" stroke-width="1.200"/><rect x="9.500" y="2.500" width="7" height="13" fill="#e8eef5" stroke="#333" stroke-width="1.200"/><rect x="11" y="5" width="4" height="2.500" fill="#2a6fd0"/><path d="M11 10.500h4M11 13h4" stroke="#555" stroke-width="1"/></svg>
<span class="t" style="left:203px;top:333.0px;font-size:15px;line-height:21px;color:#111;letter-spacing:-0.141px;">Edit Type</span>
<div class="r" style="left:2px;top:360px;width:248px;height:595px;background:#ffffff;"></div>
<div class="r" style="left:2px;top:360px;width:248px;height:24px;background:#d9d9d9;"></div>
<span class="t" style="left:4px;top:360.5px;font-size:15px;line-height:21px;color:#111;letter-spacing:-0.352px;">Constraints</span>
<svg class="r" style="left:236px;top:362px;" width="10" height="14" viewBox="0 0 10 14"><path d="M2 6l3-3 3 3M2 11l3-3 3 3" fill="none" stroke="#111" stroke-width="1.4"/></svg>
<span class="t" style="left:12px;top:384.0px;font-size:15px;line-height:21px;color:#000;letter-spacing:-0.316px;">Base Constraint</span>
<span class="t" style="left:121px;top:384.0px;font-size:15px;line-height:21px;color:#000;letter-spacing:-0.339px;">Level 0</span>
<div class="r" style="left:2px;top:407px;width:248px;height:1px;border-top:1px dotted #8a8a8a;height:0;"></div>
<span class="t" style="left:12px;top:408.0px;font-size:15px;line-height:21px;color:#000;letter-spacing:-0.284px;">Base Offset</span>
<span class="t" style="left:121px;top:408.0px;font-size:15px;line-height:21px;color:#000;letter-spacing:-0.620px;">0.0</span>
<div class="r" style="left:2px;top:431px;width:248px;height:1px;border-top:1px dotted #8a8a8a;height:0;"></div>
<span class="t" style="left:12px;top:432.0px;font-size:15px;line-height:21px;color:#7b7b7b;letter-spacing:-0.387px;">Base is Attach...</span>
<svg class="r" style="left:122px;top:435px;" width="16" height="16" viewBox="0 0 16 16"><rect x="0.7" y="0.7" width="14.600" height="14.600" rx="3" fill="#fdfdfd" stroke="#b5b5b5" stroke-width="1.2"/></svg>
<div class="r" style="left:2px;top:455px;width:248px;height:1px;border-top:1px dotted #8a8a8a;height:0;"></div>
<span class="t" style="left:12px;top:456.0px;font-size:15px;line-height:21px;color:#000;letter-spacing:0.019px;">Top Constraint</span>
<span class="t" style="left:121px;top:456.0px;font-size:15px;line-height:21px;color:#000;letter-spacing:-0.219px;">Unconnected</span>
<div class="r" style="left:2px;top:479px;width:248px;height:1px;border-top:1px dotted #8a8a8a;height:0;"></div>
<span class="t" style="left:12px;top:480.0px;font-size:15px;line-height:21px;color:#000;letter-spacing:-0.340px;">Unconnected ...</span>
<span class="t" style="left:121px;top:480.0px;font-size:15px;line-height:21px;color:#000;letter-spacing:-0.464px;">1100.0</span>
<div class="r" style="left:2px;top:503px;width:248px;height:1px;border-top:1px dotted #8a8a8a;height:0;"></div>
<span class="t" style="left:12px;top:504.0px;font-size:15px;line-height:21px;color:#7b7b7b;letter-spacing:0.188px;">Top Offset</span>
<span class="t" style="left:121px;top:504.0px;font-size:15px;line-height:21px;color:#7b7b7b;letter-spacing:-0.620px;">0.0</span>
<div class="r" style="left:2px;top:527px;width:248px;height:1px;border-top:1px dotted #8a8a8a;height:0;"></div>
<span class="t" style="left:12px;top:528.0px;font-size:15px;line-height:21px;color:#7b7b7b;letter-spacing:0.083px;">Top is Attached</span>
<svg class="r" style="left:122px;top:531px;" width="16" height="16" viewBox="0 0 16 16"><rect x="0.7" y="0.7" width="14.600" height="14.600" rx="3" fill="#fdfdfd" stroke="#b5b5b5" stroke-width="1.2"/></svg>
<div class="r" style="left:2px;top:551px;width:248px;height:1px;border-top:1px dotted #8a8a8a;height:0;"></div>
<span class="t" style="left:12px;top:552.0px;font-size:15px;line-height:21px;color:#000;letter-spacing:-0.243px;">Room Boundi...</span>
<svg class="r" style="left:122px;top:555px;" width="16" height="16" viewBox="0 0 16 16"><rect x="0.5" y="0.5" width="15" height="15" rx="3" fill="#0f5fc0" stroke="#0b4fa5"/><path d="M4 8.200l2.800 2.800 5.200-5.600" fill="none" stroke="#fff" stroke-width="1.5"/></svg>
<div class="r" style="left:2px;top:575px;width:248px;height:1px;border-top:1px dotted #8a8a8a;height:0;"></div>
<span class="t" style="left:12px;top:576.0px;font-size:15px;line-height:21px;color:#7b7b7b;letter-spacing:-0.227px;">Related to Mass</span>
<svg class="r" style="left:122px;top:579px;" width="16" height="16" viewBox="0 0 16 16"><rect x="0.7" y="0.7" width="14.600" height="14.600" rx="3" fill="#fdfdfd" stroke="#b5b5b5" stroke-width="1.2"/></svg>
<div class="r" style="left:2px;top:599px;width:248px;height:1px;border-top:1px dotted #8a8a8a;height:0;"></div>
<div class="r" style="left:2px;top:600px;width:248px;height:24px;background:#d9d9d9;"></div>
<span class="t" style="left:4px;top:600.5px;font-size:15px;line-height:21px;color:#111;letter-spacing:-0.079px;">Cross-Section Definition</span>
<svg class="r" style="left:236px;top:602px;" width="10" height="14" viewBox="0 0 10 14"><path d="M2 6l3-3 3 3M2 11l3-3 3 3" fill="none" stroke="#111" stroke-width="1.4"/></svg>
<span class="t" style="left:12px;top:624.0px;font-size:15px;line-height:21px;color:#000;letter-spacing:-0.323px;">Cross-Section</span>
<span class="t" style="left:121px;top:624.0px;font-size:15px;line-height:21px;color:#000;letter-spacing:-0.023px;">Vertical</span>
<div class="r" style="left:2px;top:647px;width:248px;height:1px;border-top:1px dotted #8a8a8a;height:0;"></div>
<div class="r" style="left:2px;top:648px;width:248px;height:24px;background:#d9d9d9;"></div>
<span class="t" style="left:4px;top:648.5px;font-size:15px;line-height:21px;color:#111;letter-spacing:-0.054px;">Vertical Grid</span>
<svg class="r" style="left:236px;top:650px;" width="10" height="14" viewBox="0 0 10 14"><path d="M2 6l3-3 3 3M2 11l3-3 3 3" fill="none" stroke="#111" stroke-width="1.4"/></svg>
<span class="t" style="left:12px;top:672.0px;font-size:15px;line-height:21px;color:#7b7b7b;letter-spacing:0.107px;">Number</span>
<span class="t" style="left:121px;top:672.0px;font-size:15px;line-height:21px;color:#7b7b7b;">6</span>
<div class="r" style="left:2px;top:695px;width:248px;height:1px;border-top:1px dotted #8a8a8a;height:0;"></div>
<span class="t" style="left:12px;top:696.0px;font-size:15px;line-height:21px;color:#000;letter-spacing:-0.029px;">Justification</span>
<span class="t" style="left:121px;top:696.0px;font-size:15px;line-height:21px;color:#000;letter-spacing:-0.080px;">Beginning</span>
<div class="r" style="left:2px;top:719px;width:248px;height:1px;border-top:1px dotted #8a8a8a;height:0;"></div>
<span class="t" style="left:12px;top:720.0px;font-size:15px;line-height:21px;color:#000;letter-spacing:0.128px;">Angle</span>
<span class="t" style="left:121px;top:720.0px;font-size:15px;line-height:21px;color:#000;letter-spacing:-0.441px;">0.00°</span>
<div class="r" style="left:2px;top:743px;width:248px;height:1px;border-top:1px dotted #8a8a8a;height:0;"></div>
<span class="t" style="left:12px;top:744.0px;font-size:15px;line-height:21px;color:#000;letter-spacing:0.039px;">Offset</span>
<span class="t" style="left:121px;top:744.0px;font-size:15px;line-height:21px;color:#000;letter-spacing:-0.620px;">0.0</span>
<div class="r" style="left:2px;top:767px;width:248px;height:1px;border-top:1px dotted #8a8a8a;height:0;"></div>
<div class="r" style="left:2px;top:768px;width:248px;height:24px;background:#d9d9d9;"></div>
<span class="t" style="left:4px;top:768.5px;font-size:15px;line-height:21px;color:#111;letter-spacing:0.064px;">Horizontal Grid</span>
<svg class="r" style="left:236px;top:770px;" width="10" height="14" viewBox="0 0 10 14"><path d="M2 6l3-3 3 3M2 11l3-3 3 3" fill="none" stroke="#111" stroke-width="1.4"/></svg>
<span class="t" style="left:12px;top:792.0px;font-size:15px;line-height:21px;color:#7b7b7b;letter-spacing:0.107px;">Number</span>
<span class="t" style="left:121px;top:792.0px;font-size:15px;line-height:21px;color:#7b7b7b;">4</span>
<div class="r" style="left:2px;top:815px;width:248px;height:1px;border-top:1px dotted #8a8a8a;height:0;"></div>
<span class="t" style="left:12px;top:816.0px;font-size:15px;line-height:21px;color:#7b7b7b;letter-spacing:-0.029px;">Justification</span>
<span class="t" style="left:121px;top:816.0px;font-size:15px;line-height:21px;color:#7b7b7b;letter-spacing:-0.080px;">Beginning</span>
<div class="r" style="left:2px;top:839px;width:248px;height:1px;border-top:1px dotted #8a8a8a;height:0;"></div>
<span class="t" style="left:12px;top:840.0px;font-size:15px;line-height:21px;color:#000;letter-spacing:0.128px;">Angle</span>
<span class="t" style="left:121px;top:840.0px;font-size:15px;line-height:21px;color:#000;letter-spacing:-0.441px;">0.00°</span>
<div class="r" style="left:2px;top:863px;width:248px;height:1px;border-top:1px dotted #8a8a8a;height:0;"></div>
<span class="t" style="left:12px;top:864.0px;font-size:15px;line-height:21px;color:#000;letter-spacing:0.039px;">Offset</span>
<span class="t" style="left:121px;top:864.0px;font-size:15px;line-height:21px;color:#000;letter-spacing:-0.620px;">0.0</span>
<div class="r" style="left:2px;top:887px;width:248px;height:1px;border-top:1px dotted #8a8a8a;height:0;"></div>
<div class="r" style="left:2px;top:888px;width:248px;height:24px;background:#d9d9d9;"></div>
<span class="t" style="left:4px;top:888.5px;font-size:15px;line-height:21px;color:#111;letter-spacing:-0.220px;">Structural</span>
<svg class="r" style="left:236px;top:890px;" width="10" height="14" viewBox="0 0 10 14"><path d="M2 6l3-3 3 3M2 11l3-3 3 3" fill="none" stroke="#111" stroke-width="1.4"/></svg>
<span class="t" style="left:12px;top:912.0px;font-size:15px;line-height:21px;color:#000;letter-spacing:-0.220px;">Structural</span>
<svg class="r" style="left:122px;top:915px;" width="16" height="16" viewBox="0 0 16 16"><rect x="0.7" y="0.7" width="14.600" height="14.600" rx="3" fill="#fdfdfd" stroke="#6a6a6a" stroke-width="1.2"/></svg>
<div class="r" style="left:2px;top:935px;width:248px;height:1px;border-top:1px dotted #8a8a8a;height:0;"></div>
<span class="t" style="left:12px;top:936.0px;font-size:15px;line-height:21px;color:#7b7b7b;letter-spacing:-0.445px;">Structural Usa...</span>
<span class="t" style="left:121px;top:936.0px;font-size:15px;line-height:21px;color:#7b7b7b;letter-spacing:0.222px;">Non-bearing</span>
<div class="r" style="left:2px;top:959px;width:248px;height:1px;border-top:1px dotted #8a8a8a;height:0;"></div>
<div class="r" style="left:118px;top:384px;width:0px;height:24px;border-left:1px dotted #8a8a8a;width:0;"></div>
<div class="r" style="left:235px;top:384px;width:0px;height:24px;border-left:1px dotted #8a8a8a;width:0;"></div>
<div class="r" style="left:250px;top:384px;width:0px;height:24px;border-left:1px dotted #8a8a8a;width:0;"></div>
<div class="r" style="left:118px;top:408px;width:0px;height:24px;border-left:1px dotted #8a8a8a;width:0;"></div>
<div class="r" style="left:235px;top:408px;width:0px;height:24px;border-left:1px dotted #8a8a8a;width:0;"></div>
<div class="r" style="left:250px;top:408px;width:0px;height:24px;border-left:1px dotted #8a8a8a;width:0;"></div>
<div class="r" style="left:118px;top:432px;width:0px;height:24px;border-left:1px dotted #8a8a8a;width:0;"></div>
<div class="r" style="left:235px;top:432px;width:0px;height:24px;border-left:1px dotted #8a8a8a;width:0;"></div>
<div class="r" style="left:250px;top:432px;width:0px;height:24px;border-left:1px dotted #8a8a8a;width:0;"></div>
<div class="r" style="left:118px;top:456px;width:0px;height:24px;border-left:1px dotted #8a8a8a;width:0;"></div>
<div class="r" style="left:235px;top:456px;width:0px;height:24px;border-left:1px dotted #8a8a8a;width:0;"></div>
<div class="r" style="left:250px;top:456px;width:0px;height:24px;border-left:1px dotted #8a8a8a;width:0;"></div>
<div class="r" style="left:118px;top:480px;width:0px;height:24px;border-left:1px dotted #8a8a8a;width:0;"></div>
<div class="r" style="left:235px;top:480px;width:0px;height:24px;border-left:1px dotted #8a8a8a;width:0;"></div>
<div class="r" style="left:250px;top:480px;width:0px;height:24px;border-left:1px dotted #8a8a8a;width:0;"></div>
<div class="r" style="left:118px;top:504px;width:0px;height:24px;border-left:1px dotted #8a8a8a;width:0;"></div>
<div class="r" style="left:235px;top:504px;width:0px;height:24px;border-left:1px dotted #8a8a8a;width:0;"></div>
<div class="r" style="left:250px;top:504px;width:0px;height:24px;border-left:1px dotted #8a8a8a;width:0;"></div>
<div class="r" style="left:118px;top:528px;width:0px;height:24px;border-left:1px dotted #8a8a8a;width:0;"></div>
<div class="r" style="left:235px;top:528px;width:0px;height:24px;border-left:1px dotted #8a8a8a;width:0;"></div>
<div class="r" style="left:250px;top:528px;width:0px;height:24px;border-left:1px dotted #8a8a8a;width:0;"></div>
<div class="r" style="left:118px;top:552px;width:0px;height:24px;border-left:1px dotted #8a8a8a;width:0;"></div>
<div class="r" style="left:235px;top:552px;width:0px;height:24px;border-left:1px dotted #8a8a8a;width:0;"></div>
<div class="r" style="left:250px;top:552px;width:0px;height:24px;border-left:1px dotted #8a8a8a;width:0;"></div>
<div class="r" style="left:118px;top:576px;width:0px;height:24px;border-left:1px dotted #8a8a8a;width:0;"></div>
<div class="r" style="left:235px;top:576px;width:0px;height:24px;border-left:1px dotted #8a8a8a;width:0;"></div>
<div class="r" style="left:250px;top:576px;width:0px;height:24px;border-left:1px dotted #8a8a8a;width:0;"></div>
<div class="r" style="left:118px;top:624px;width:0px;height:24px;border-left:1px dotted #8a8a8a;width:0;"></div>
<div class="r" style="left:235px;top:624px;width:0px;height:24px;border-left:1px dotted #8a8a8a;width:0;"></div>
<div class="r" style="left:250px;top:624px;width:0px;height:24px;border-left:1px dotted #8a8a8a;width:0;"></div>
<div class="r" style="left:118px;top:672px;width:0px;height:24px;border-left:1px dotted #8a8a8a;width:0;"></div>
<div class="r" style="left:235px;top:672px;width:0px;height:24px;border-left:1px dotted #8a8a8a;width:0;"></div>
<div class="r" style="left:250px;top:672px;width:0px;height:24px;border-left:1px dotted #8a8a8a;width:0;"></div>
<div class="r" style="left:118px;top:696px;width:0px;height:24px;border-left:1px dotted #8a8a8a;width:0;"></div>
<div class="r" style="left:235px;top:696px;width:0px;height:24px;border-left:1px dotted #8a8a8a;width:0;"></div>
<div class="r" style="left:250px;top:696px;width:0px;height:24px;border-left:1px dotted #8a8a8a;width:0;"></div>
<div class="r" style="left:118px;top:720px;width:0px;height:24px;border-left:1px dotted #8a8a8a;width:0;"></div>
<div class="r" style="left:235px;top:720px;width:0px;height:24px;border-left:1px dotted #8a8a8a;width:0;"></div>
<div class="r" style="left:250px;top:720px;width:0px;height:24px;border-left:1px dotted #8a8a8a;width:0;"></div>
<div class="r" style="left:118px;top:744px;width:0px;height:24px;border-left:1px dotted #8a8a8a;width:0;"></div>
<div class="r" style="left:235px;top:744px;width:0px;height:24px;border-left:1px dotted #8a8a8a;width:0;"></div>
<div class="r" style="left:250px;top:744px;width:0px;height:24px;border-left:1px dotted #8a8a8a;width:0;"></div>
<div class="r" style="left:118px;top:792px;width:0px;height:24px;border-left:1px dotted #8a8a8a;width:0;"></div>
<div class="r" style="left:235px;top:792px;width:0px;height:24px;border-left:1px dotted #8a8a8a;width:0;"></div>
<div class="r" style="left:250px;top:792px;width:0px;height:24px;border-left:1px dotted #8a8a8a;width:0;"></div>
<div class="r" style="left:118px;top:816px;width:0px;height:24px;border-left:1px dotted #8a8a8a;width:0;"></div>
<div class="r" style="left:235px;top:816px;width:0px;height:24px;border-left:1px dotted #8a8a8a;width:0;"></div>
<div class="r" style="left:250px;top:816px;width:0px;height:24px;border-left:1px dotted #8a8a8a;width:0;"></div>
<div class="r" style="left:118px;top:840px;width:0px;height:24px;border-left:1px dotted #8a8a8a;width:0;"></div>
<div class="r" style="left:235px;top:840px;width:0px;height:24px;border-left:1px dotted #8a8a8a;width:0;"></div>
<div class="r" style="left:250px;top:840px;width:0px;height:24px;border-left:1px dotted #8a8a8a;width:0;"></div>
<div class="r" style="left:118px;top:864px;width:0px;height:24px;border-left:1px dotted #8a8a8a;width:0;"></div>
<div class="r" style="left:235px;top:864px;width:0px;height:24px;border-left:1px dotted #8a8a8a;width:0;"></div>
<div class="r" style="left:250px;top:864px;width:0px;height:24px;border-left:1px dotted #8a8a8a;width:0;"></div>
<div class="r" style="left:118px;top:912px;width:0px;height:24px;border-left:1px dotted #8a8a8a;width:0;"></div>
<div class="r" style="left:235px;top:912px;width:0px;height:24px;border-left:1px dotted #8a8a8a;width:0;"></div>
<div class="r" style="left:250px;top:912px;width:0px;height:24px;border-left:1px dotted #8a8a8a;width:0;"></div>
<div class="r" style="left:118px;top:936px;width:0px;height:24px;border-left:1px dotted #8a8a8a;width:0;"></div>
<div class="r" style="left:235px;top:936px;width:0px;height:24px;border-left:1px dotted #8a8a8a;width:0;"></div>
<div class="r" style="left:250px;top:936px;width:0px;height:24px;border-left:1px dotted #8a8a8a;width:0;"></div>
<div class="r" style="left:0px;top:955px;width:275px;height:33px;background:#f0f0f0;"></div>
<div class="r" style="left:118px;top:384px;width:118px;height:24px;border:1.500px solid #111;box-sizing:border-box;"></div>
<div class="r" style="left:237px;top:409px;width:12px;height:21px;background:#fff;border:1px solid #bdbdbd;border-radius:3px;box-sizing:border-box;"></div>
<div class="r" style="left:250px;top:360px;width:25px;height:595px;background:#f0f0f0;"></div>
<div class="r" style="left:258px;top:381px;width:6px;height:331px;background:#7f7f7f;"></div>
<span class="t" style="left:4px;top:957.0px;font-size:15px;line-height:21px;color:#0a5bd0;letter-spacing:-0.060px;text-decoration:underline;">Properties help</span>
<div class="r" style="left:185px;top:957px;width:85px;height:27px;background:#f4f4f4;border:1px solid #e0e0e0;border-radius:4px;box-sizing:border-box;"></div>
<span class="t" style="left:207px;top:960.0px;font-size:15px;line-height:21px;color:#9a9a9a;letter-spacing:0.297px;">Apply</span>
<div class="r" style="left:1657px;top:218px;width:263px;height:770px;background:#f0f0f0;"></div>
<div class="r" style="left:1656px;top:218px;width:2px;height:770px;background:#e4e4e4;"></div>
<span class="t" style="left:1663px;top:219.0px;font-size:15px;line-height:21px;color:#383838;letter-spacing:-0.150px;">Project Browser - hotelproject (1)(Re...</span>
<div class="r" style="left:1660px;top:242px;width:240px;height:724px;background:#ffffff;"></div>
<div class="r" style="left:1900px;top:242px;width:20px;height:724px;background:#f0f0f0;"></div>
<div class="r" style="left:1907px;top:263px;width:6px;height:36px;background:#7f7f7f;"></div>
<div class="r" style="left:1681px;top:973px;width:95px;height:6px;background:#858585;"></div>
<div class="r" style="left:1670px;top:261px;width:0px;height:705px;border-left:1px dotted #8c8c8c;width:0;"></div>
<div class="r" style="left:1696px;top:262px;width:0px;height:541px;border-left:1px dotted #8c8c8c;width:0;"></div>
<div class="r" style="left:1696px;top:944px;width:0px;height:13px;border-left:1px dotted #8c8c8c;width:0;"></div>
<div class="r" style="left:1722px;top:283px;width:0px;height:256px;border-left:1px dotted #8c8c8c;width:0;"></div>
<div class="r" style="left:1722px;top:569px;width:0px;height:36px;border-left:1px dotted #8c8c8c;width:0;"></div>
<div class="r" style="left:1722px;top:635px;width:0px;height:14px;border-left:1px dotted #8c8c8c;width:0;"></div>
<div class="r" style="left:1722px;top:679px;width:0px;height:102px;border-left:1px dotted #8c8c8c;width:0;"></div>
<div class="r" style="left:1722px;top:811px;width:0px;height:36px;border-left:1px dotted #8c8c8c;width:0;"></div>
<svg class="r" style="left:1664.0px;top:248.0px;" width="13" height="13" viewBox="0 0 13 13"><defs><linearGradient id="eg" x1="0" y1="0" x2="0" y2="1"><stop offset="0" stop-color="#fff"/><stop offset="0.55" stop-color="#f4f4f4"/><stop offset="0.56" stop-color="#dedede"/><stop offset="1" stop-color="#e6e6e6"/></linearGradient></defs><rect x="0.500" y="0.500" width="12" height="12" rx="1.500" fill="url(#eg)" stroke="#8e8e8e"/><path d="M2.500 6.500h8" stroke="#2a4fb0" stroke-width="1.300"/></svg>
<div class="r" style="left:1678px;top:254px;width:8px;height:0px;border-top:1px dotted #8c8c8c;height:0;"></div>
<svg class="r" style="left:1686px;top:244px;" width="20" height="20" viewBox="0 0 20 20"><path d="M1 5v-4h4M15 1h4v4M19 14v4h-4M5 18h-4v-4" fill="none" stroke="#3d4150" stroke-width="1.600"/><path d="M5.500 7l2.500-2.500h7v7l-2.500 2.500h-7z" fill="#e4e6ee" stroke="#4a4e5c" stroke-width="1.400"/></svg>
<span class="t" style="left:1712px;top:242.5px;font-size:15px;line-height:21px;color:#111;letter-spacing:-0.173px;">Views (all)</span>
<svg class="r" style="left:1690.0px;top:270.0px;" width="13" height="13" viewBox="0 0 13 13"><defs><linearGradient id="eg" x1="0" y1="0" x2="0" y2="1"><stop offset="0" stop-color="#fff"/><stop offset="0.55" stop-color="#f4f4f4"/><stop offset="0.56" stop-color="#dedede"/><stop offset="1" stop-color="#e6e6e6"/></linearGradient></defs><rect x="0.500" y="0.500" width="12" height="12" rx="1.500" fill="url(#eg)" stroke="#8e8e8e"/><path d="M2.500 6.500h8" stroke="#2a4fb0" stroke-width="1.300"/></svg>
<div class="r" style="left:1704px;top:276px;width:11px;height:0px;border-top:1px dotted #8c8c8c;height:0;"></div>
<span class="t" style="left:1718px;top:264.5px;font-size:15px;line-height:21px;color:#111;letter-spacing:-0.260px;">Floor Plans</span>
<div class="r" style="left:1723px;top:298px;width:15px;height:0px;border-top:1px dotted #8c8c8c;height:0;"></div>
<svg class="r" style="left:1738px;top:286px;" width="20" height="20" viewBox="0 0 20 20"><rect x="0.500" y="0.500" width="19" height="19" fill="#fff" stroke="#444" stroke-width="1" stroke-dasharray="3 1.500"/><rect x="3.700" y="3.700" width="13" height="13" fill="#f1f1f1" stroke="#555" stroke-width="1.600"/><path d="M3 17h14.500" stroke="#555" stroke-width="1.400"/></svg>
<span class="t" style="left:1764px;top:286.5px;font-size:15px;line-height:21px;color:#111;letter-spacing:-0.339px;">Level 0</span>
<div class="r" style="left:1723px;top:320px;width:15px;height:0px;border-top:1px dotted #8c8c8c;height:0;"></div>
<svg class="r" style="left:1738px;top:308px;" width="20" height="20" viewBox="0 0 20 20"><rect x="0.500" y="0.500" width="19" height="19" fill="#fff" stroke="#444" stroke-width="1" stroke-dasharray="3 1.500"/><rect x="3.700" y="3.700" width="13" height="13" fill="#f1f1f1" stroke="#555" stroke-width="1.600"/><path d="M3 17h14.500" stroke="#555" stroke-width="1.400"/></svg>
<span class="t" style="left:1764px;top:308.5px;font-size:15px;line-height:21px;color:#111;letter-spacing:-0.482px;">Level 1</span>
<div class="r" style="left:1723px;top:342px;width:15px;height:0px;border-top:1px dotted #8c8c8c;height:0;"></div>
<svg class="r" style="left:1738px;top:330px;" width="20" height="20" viewBox="0 0 20 20"><rect x="0.500" y="0.500" width="19" height="19" fill="#fff" stroke="#444" stroke-width="1" stroke-dasharray="3 1.500"/><rect x="3.700" y="3.700" width="13" height="13" fill="#f1f1f1" stroke="#555" stroke-width="1.600"/><path d="M3 17h14.500" stroke="#555" stroke-width="1.400"/></svg>
<span class="t" style="left:1764px;top:330.5px;font-size:15px;line-height:21px;color:#111;letter-spacing:-0.339px;">Level 2</span>
<div class="r" style="left:1723px;top:364px;width:15px;height:0px;border-top:1px dotted #8c8c8c;height:0;"></div>
<svg class="r" style="left:1738px;top:352px;" width="20" height="20" viewBox="0 0 20 20"><rect x="0.500" y="0.500" width="19" height="19" fill="#fff" stroke="#444" stroke-width="1" stroke-dasharray="3 1.500"/><rect x="3.700" y="3.700" width="13" height="13" fill="#f1f1f1" stroke="#555" stroke-width="1.600"/><path d="M3 17h14.500" stroke="#555" stroke-width="1.400"/></svg>
<span class="t" style="left:1764px;top:352.5px;font-size:15px;line-height:21px;color:#111;letter-spacing:-0.339px;">Level 3</span>
<div class="r" style="left:1723px;top:386px;width:15px;height:0px;border-top:1px dotted #8c8c8c;height:0;"></div>
<svg class="r" style="left:1738px;top:374px;" width="20" height="20" viewBox="0 0 20 20"><rect x="0.500" y="0.500" width="19" height="19" fill="#fff" stroke="#444" stroke-width="1" stroke-dasharray="3 1.500"/><rect x="3.700" y="3.700" width="13" height="13" fill="#f1f1f1" stroke="#555" stroke-width="1.600"/><path d="M3 17h14.500" stroke="#555" stroke-width="1.400"/></svg>
<span class="t" style="left:1764px;top:374.5px;font-size:15px;line-height:21px;color:#111;letter-spacing:-0.339px;">Level 4</span>
<div class="r" style="left:1723px;top:408px;width:15px;height:0px;border-top:1px dotted #8c8c8c;height:0;"></div>
<svg class="r" style="left:1738px;top:396px;" width="20" height="20" viewBox="0 0 20 20"><rect x="0.500" y="0.500" width="19" height="19" fill="#fff" stroke="#444" stroke-width="1" stroke-dasharray="3 1.500"/><rect x="3.700" y="3.700" width="13" height="13" fill="#f1f1f1" stroke="#555" stroke-width="1.600"/><path d="M3 17h14.500" stroke="#555" stroke-width="1.400"/></svg>
<span class="t" style="left:1764px;top:396.5px;font-size:15px;line-height:21px;color:#111;letter-spacing:-0.339px;">Level 5</span>
<div class="r" style="left:1723px;top:430px;width:15px;height:0px;border-top:1px dotted #8c8c8c;height:0;"></div>
<svg class="r" style="left:1738px;top:418px;" width="20" height="20" viewBox="0 0 20 20"><rect x="0.500" y="0.500" width="19" height="19" fill="#fff" stroke="#444" stroke-width="1" stroke-dasharray="3 1.500"/><rect x="3.700" y="3.700" width="13" height="13" fill="#f1f1f1" stroke="#555" stroke-width="1.600"/><path d="M3 17h14.500" stroke="#555" stroke-width="1.400"/></svg>
<span class="t" style="left:1764px;top:418.5px;font-size:15px;line-height:21px;color:#111;letter-spacing:-0.339px;">Level 6</span>
<div class="r" style="left:1723px;top:452px;width:15px;height:0px;border-top:1px dotted #8c8c8c;height:0;"></div>
<svg class="r" style="left:1738px;top:440px;" width="20" height="20" viewBox="0 0 20 20"><rect x="0.500" y="0.500" width="19" height="19" fill="#fff" stroke="#444" stroke-width="1" stroke-dasharray="3 1.500"/><rect x="3.700" y="3.700" width="13" height="13" fill="#f1f1f1" stroke="#555" stroke-width="1.600"/><path d="M3 17h14.500" stroke="#555" stroke-width="1.400"/></svg>
<span class="t" style="left:1764px;top:440.5px;font-size:15px;line-height:21px;color:#111;letter-spacing:-0.340px;">Level 23</span>
<div class="r" style="left:1723px;top:474px;width:15px;height:0px;border-top:1px dotted #8c8c8c;height:0;"></div>
<svg class="r" style="left:1738px;top:462px;" width="20" height="20" viewBox="0 0 20 20"><rect x="0.500" y="0.500" width="19" height="19" fill="#fff" stroke="#444" stroke-width="1" stroke-dasharray="3 1.500"/><rect x="3.700" y="3.700" width="13" height="13" fill="#f1f1f1" stroke="#555" stroke-width="1.600"/><path d="M3 17h14.500" stroke="#555" stroke-width="1.400"/></svg>
<span class="t" style="left:1764px;top:462.5px;font-size:15px;line-height:21px;color:#111;letter-spacing:-0.643px;">LevelB</span>
<div class="r" style="left:1723px;top:496px;width:15px;height:0px;border-top:1px dotted #8c8c8c;height:0;"></div>
<svg class="r" style="left:1738px;top:484px;" width="20" height="20" viewBox="0 0 20 20"><rect x="0.500" y="0.500" width="19" height="19" fill="#fff" stroke="#444" stroke-width="1" stroke-dasharray="3 1.500"/><rect x="3.700" y="3.700" width="13" height="13" fill="#f1f1f1" stroke="#555" stroke-width="1.600"/><path d="M3 17h14.500" stroke="#555" stroke-width="1.400"/></svg>
<span class="t" style="left:1764px;top:484.5px;font-size:15px;line-height:21px;color:#111;letter-spacing:0.535px;">roof</span>
<div class="r" style="left:1723px;top:518px;width:15px;height:0px;border-top:1px dotted #8c8c8c;height:0;"></div>
<svg class="r" style="left:1738px;top:506px;" width="20" height="20" viewBox="0 0 20 20"><rect x="0.500" y="0.500" width="19" height="19" fill="#fff" stroke="#444" stroke-width="1" stroke-dasharray="3 1.500"/><rect x="3.700" y="3.700" width="13" height="13" fill="#f1f1f1" stroke="#555" stroke-width="1.600"/><path d="M3 17h14.500" stroke="#555" stroke-width="1.400"/></svg>
<span class="t" style="left:1764px;top:506.5px;font-size:15px;line-height:21px;color:#111;letter-spacing:-0.211px;">Site</span>
<div class="r" style="left:1723px;top:540px;width:15px;height:0px;border-top:1px dotted #8c8c8c;height:0;"></div>
<svg class="r" style="left:1738px;top:528px;" width="20" height="20" viewBox="0 0 20 20"><rect x="0.500" y="0.500" width="19" height="19" fill="#fff" stroke="#444" stroke-width="1" stroke-dasharray="3 1.500"/><rect x="3.700" y="3.700" width="13" height="13" fill="#f1f1f1" stroke="#555" stroke-width="1.600"/><path d="M3 17h14.500" stroke="#555" stroke-width="1.400"/></svg>
<span class="t" style="left:1764px;top:528.5px;font-size:15px;line-height:21px;color:#111;letter-spacing:-0.135px;">WINDOW</span>
<svg class="r" style="left:1690.0px;top:556.0px;" width="13" height="13" viewBox="0 0 13 13"><defs><linearGradient id="eg" x1="0" y1="0" x2="0" y2="1"><stop offset="0" stop-color="#fff"/><stop offset="0.55" stop-color="#f4f4f4"/><stop offset="0.56" stop-color="#dedede"/><stop offset="1" stop-color="#e6e6e6"/></linearGradient></defs><rect x="0.500" y="0.500" width="12" height="12" rx="1.500" fill="url(#eg)" stroke="#8e8e8e"/><path d="M2.500 6.500h8" stroke="#2a4fb0" stroke-width="1.300"/></svg>
<div class="r" style="left:1704px;top:562px;width:11px;height:0px;border-top:1px dotted #8c8c8c;height:0;"></div>
<span class="t" style="left:1718px;top:550.5px;font-size:15px;line-height:21px;color:#111;letter-spacing:-0.118px;">Ceiling Plans</span>
<div class="r" style="left:1723px;top:584px;width:15px;height:0px;border-top:1px dotted #8c8c8c;height:0;"></div>
<svg class="r" style="left:1738px;top:572px;" width="20" height="20" viewBox="0 0 20 20"><rect x="0.500" y="0.500" width="19" height="19" fill="#fff" stroke="#444" stroke-width="1" stroke-dasharray="3 1.500"/><rect x="3.700" y="3.700" width="13" height="13" fill="#f1f1f1" stroke="#555" stroke-width="1.600"/><path d="M3 17h14.500" stroke="#555" stroke-width="1.400"/></svg>
<span class="t" style="left:1764px;top:572.5px;font-size:15px;line-height:21px;color:#111;letter-spacing:-0.339px;">Level 0</span>
<div class="r" style="left:1723px;top:606px;width:15px;height:0px;border-top:1px dotted #8c8c8c;height:0;"></div>
<svg class="r" style="left:1738px;top:594px;" width="20" height="20" viewBox="0 0 20 20"><rect x="0.500" y="0.500" width="19" height="19" fill="#fff" stroke="#444" stroke-width="1" stroke-dasharray="3 1.500"/><rect x="3.700" y="3.700" width="13" height="13" fill="#f1f1f1" stroke="#555" stroke-width="1.600"/><path d="M3 17h14.500" stroke="#555" stroke-width="1.400"/></svg>
<span class="t" style="left:1764px;top:594.5px;font-size:15px;line-height:21px;color:#111;letter-spacing:-0.482px;">Level 1</span>
<svg class="r" style="left:1690.0px;top:622.0px;" width="13" height="13" viewBox="0 0 13 13"><defs><linearGradient id="eg" x1="0" y1="0" x2="0" y2="1"><stop offset="0" stop-color="#fff"/><stop offset="0.55" stop-color="#f4f4f4"/><stop offset="0.56" stop-color="#dedede"/><stop offset="1" stop-color="#e6e6e6"/></linearGradient></defs><rect x="0.500" y="0.500" width="12" height="12" rx="1.500" fill="url(#eg)" stroke="#8e8e8e"/><path d="M2.500 6.500h8" stroke="#2a4fb0" stroke-width="1.300"/></svg>
<div class="r" style="left:1704px;top:628px;width:11px;height:0px;border-top:1px dotted #8c8c8c;height:0;"></div>
<span class="t" style="left:1718px;top:616.5px;font-size:15px;line-height:21px;color:#111;letter-spacing:-0.260px;">3D Views</span>
<div class="r" style="left:1723px;top:650px;width:15px;height:0px;border-top:1px dotted #8c8c8c;height:0;"></div>
<svg class="r" style="left:1738px;top:638px;" width="20" height="20" viewBox="0 0 20 20"><rect x="0.500" y="0.500" width="19" height="19" fill="#fff" stroke="#444" stroke-width="1" stroke-dasharray="3 1.500"/><rect x="3.700" y="3.700" width="13" height="13" fill="#f1f1f1" stroke="#555" stroke-width="1.600"/><path d="M3 17h14.500" stroke="#555" stroke-width="1.400"/></svg>
<div class="r" style="left:1761px;top:639px;width:37px;height:21px;background:#e5e5e5;"></div>
<span class="t" style="left:1764px;top:638.5px;font-size:15px;line-height:21px;color:#111;letter-spacing:0.035px;font-weight:bold;">{3D}</span>
<svg class="r" style="left:1690.0px;top:666.0px;" width="13" height="13" viewBox="0 0 13 13"><defs><linearGradient id="eg" x1="0" y1="0" x2="0" y2="1"><stop offset="0" stop-color="#fff"/><stop offset="0.55" stop-color="#f4f4f4"/><stop offset="0.56" stop-color="#dedede"/><stop offset="1" stop-color="#e6e6e6"/></linearGradient></defs><rect x="0.500" y="0.500" width="12" height="12" rx="1.500" fill="url(#eg)" stroke="#8e8e8e"/><path d="M2.500 6.500h8" stroke="#2a4fb0" stroke-width="1.300"/></svg>
<div class="r" style="left:1704px;top:672px;width:11px;height:0px;border-top:1px dotted #8c8c8c;height:0;"></div>
<span class="t" style="left:1718px;top:660.5px;font-size:15px;line-height:21px;color:#111;letter-spacing:0.003px;">Elevations (Building Elevati</span>
<div class="r" style="left:1723px;top:694px;width:15px;height:0px;border-top:1px dotted #8c8c8c;height:0;"></div>
<svg class="r" style="left:1738px;top:682px;" width="20" height="20" viewBox="0 0 20 20"><rect x="0.500" y="0.500" width="19" height="19" fill="#fff" stroke="#444" stroke-width="1" stroke-dasharray="3 1.500"/><rect x="3.700" y="3.700" width="13" height="13" fill="#f1f1f1" stroke="#555" stroke-width="1.600"/><path d="M3 17h14.500" stroke="#555" stroke-width="1.400"/></svg>
<span class="t" style="left:1764px;top:682.5px;font-size:15px;line-height:21px;color:#111;letter-spacing:0.015px;">_levelssettingout</span>
<div class="r" style="left:1723px;top:716px;width:15px;height:0px;border-top:1px dotted #8c8c8c;height:0;"></div>
<svg class="r" style="left:1738px;top:704px;" width="20" height="20" viewBox="0 0 20 20"><rect x="0.500" y="0.500" width="19" height="19" fill="#fff" stroke="#444" stroke-width="1" stroke-dasharray="3 1.500"/><rect x="3.700" y="3.700" width="13" height="13" fill="#f1f1f1" stroke="#555" stroke-width="1.600"/><path d="M3 17h14.500" stroke="#555" stroke-width="1.400"/></svg>
<span class="t" style="left:1764px;top:704.5px;font-size:15px;line-height:21px;color:#111;letter-spacing:-0.754px;">East</span>
<div class="r" style="left:1723px;top:738px;width:15px;height:0px;border-top:1px dotted #8c8c8c;height:0;"></div>
<svg class="r" style="left:1738px;top:726px;" width="20" height="20" viewBox="0 0 20 20"><rect x="0.500" y="0.500" width="19" height="19" fill="#fff" stroke="#444" stroke-width="1" stroke-dasharray="3 1.500"/><rect x="3.700" y="3.700" width="13" height="13" fill="#f1f1f1" stroke="#555" stroke-width="1.600"/><path d="M3 17h14.500" stroke="#555" stroke-width="1.400"/></svg>
<span class="t" style="left:1764px;top:726.5px;font-size:15px;line-height:21px;color:#111;letter-spacing:0.263px;">North</span>
<div class="r" style="left:1723px;top:760px;width:15px;height:0px;border-top:1px dotted #8c8c8c;height:0;"></div>
<svg class="r" style="left:1738px;top:748px;" width="20" height="20" viewBox="0 0 20 20"><rect x="0.500" y="0.500" width="19" height="19" fill="#fff" stroke="#444" stroke-width="1" stroke-dasharray="3 1.500"/><rect x="3.700" y="3.700" width="13" height="13" fill="#f1f1f1" stroke="#555" stroke-width="1.600"/><path d="M3 17h14.500" stroke="#555" stroke-width="1.400"/></svg>
<span class="t" style="left:1764px;top:748.5px;font-size:15px;line-height:21px;color:#111;letter-spacing:-0.041px;">South</span>
<div class="r" style="left:1723px;top:782px;width:15px;height:0px;border-top:1px dotted #8c8c8c;height:0;"></div>
<svg class="r" style="left:1738px;top:770px;" width="20" height="20" viewBox="0 0 20 20"><rect x="0.500" y="0.500" width="19" height="19" fill="#fff" stroke="#444" stroke-width="1" stroke-dasharray="3 1.500"/><rect x="3.700" y="3.700" width="13" height="13" fill="#f1f1f1" stroke="#555" stroke-width="1.600"/><path d="M3 17h14.500" stroke="#555" stroke-width="1.400"/></svg>
<span class="t" style="left:1764px;top:770.5px;font-size:15px;line-height:21px;color:#111;letter-spacing:-0.477px;">West</span>
<svg class="r" style="left:1690.0px;top:798.0px;" width="13" height="13" viewBox="0 0 13 13"><defs><linearGradient id="eg" x1="0" y1="0" x2="0" y2="1"><stop offset="0" stop-color="#fff"/><stop offset="0.55" stop-color="#f4f4f4"/><stop offset="0.56" stop-color="#dedede"/><stop offset="1" stop-color="#e6e6e6"/></linearGradient></defs><rect x="0.500" y="0.500" width="12" height="12" rx="1.500" fill="url(#eg)" stroke="#8e8e8e"/><path d="M2.500 6.500h8" stroke="#2a4fb0" stroke-width="1.300"/></svg>
<div class="r" style="left:1704px;top:804px;width:11px;height:0px;border-top:1px dotted #8c8c8c;height:0;"></div>
<span class="t" style="left:1718px;top:792.5px;font-size:15px;line-height:21px;color:#111;letter-spacing:0.028px;">Sections (Building Section</span>
<div class="r" style="left:1723px;top:826px;width:15px;height:0px;border-top:1px dotted #8c8c8c;height:0;"></div>
<svg class="r" style="left:1738px;top:814px;" width="20" height="20" viewBox="0 0 20 20"><rect x="0.500" y="0.500" width="19" height="19" fill="#fff" stroke="#444" stroke-width="1" stroke-dasharray="3 1.500"/><rect x="3.700" y="3.700" width="13" height="13" fill="#f1f1f1" stroke="#555" stroke-width="1.600"/><path d="M3 17h14.500" stroke="#555" stroke-width="1.400"/></svg>
<span class="t" style="left:1764px;top:814.5px;font-size:15px;line-height:21px;color:#111;letter-spacing:-0.172px;">Section 1</span>
<div class="r" style="left:1723px;top:848px;width:15px;height:0px;border-top:1px dotted #8c8c8c;height:0;"></div>
<svg class="r" style="left:1738px;top:836px;" width="20" height="20" viewBox="0 0 20 20"><rect x="0.500" y="0.500" width="19" height="19" fill="#fff" stroke="#444" stroke-width="1" stroke-dasharray="3 1.500"/><rect x="3.700" y="3.700" width="13" height="13" fill="#f1f1f1" stroke="#555" stroke-width="1.600"/><path d="M3 17h14.500" stroke="#555" stroke-width="1.400"/></svg>
<span class="t" style="left:1764px;top:836.5px;font-size:15px;line-height:21px;color:#111;letter-spacing:-0.061px;">Section 2</span>
<div class="r" style="left:1671px;top:870px;width:15px;height:0px;border-top:1px dotted #8c8c8c;height:0;"></div>
<svg class="r" style="left:1686px;top:859px;" width="20" height="20" viewBox="0 0 20 20"><rect x="1" y="2" width="18" height="16" fill="#f4f4f4" stroke="#555" stroke-width="1.300"/><rect x="1" y="2" width="18" height="3.500" fill="#777"/><rect x="3" y="7.500" width="5" height="3" fill="#888"/><rect x="3" y="12.500" width="5" height="3" fill="#888"/><path d="M10 9h7M10 14h7" stroke="#777" stroke-width="1.400"/></svg>
<span class="t" style="left:1712px;top:858.5px;font-size:15px;line-height:21px;color:#111;letter-spacing:-0.223px;">Legends</span>
<div class="r" style="left:1671px;top:892px;width:15px;height:0px;border-top:1px dotted #8c8c8c;height:0;"></div>
<svg class="r" style="left:1686px;top:881px;" width="20" height="20" viewBox="0 0 20 20"><rect x="1" y="3" width="18" height="14" fill="#f8f8f8" stroke="#555" stroke-width="1.300"/><rect x="1" y="3" width="18" height="3.500" fill="#666"/><path d="M1 10h18M1 13.500h18M7 6v11M13 6v11" stroke="#999" stroke-width="1"/></svg>
<span class="t" style="left:1712px;top:880.5px;font-size:15px;line-height:21px;color:#111;letter-spacing:0.041px;">Schedules/Quantities (all)</span>
<div class="r" style="left:1671px;top:914px;width:15px;height:0px;border-top:1px dotted #8c8c8c;height:0;"></div>
<svg class="r" style="left:1686px;top:903px;" width="20" height="20" viewBox="0 0 20 20"><path d="M1 2h13l5 5v11h-18z" fill="#f4f4f4" stroke="#555" stroke-width="1.300"/><path d="M14 2v5h5" fill="none" stroke="#555" stroke-width="1.200"/><path d="M4 15v-6h8v3h-4v3z" fill="#ccc" stroke="#666" stroke-width="1.100"/></svg>
<span class="t" style="left:1712px;top:902.5px;font-size:15px;line-height:21px;color:#111;letter-spacing:-0.240px;">Sheets (all)</span>
<div class="r" style="left:1671px;top:936px;width:15px;height:0px;border-top:1px dotted #8c8c8c;height:0;"></div>
<svg class="r" style="left:1664.0px;top:930.0px;" width="13" height="13" viewBox="0 0 13 13"><defs><linearGradient id="eg" x1="0" y1="0" x2="0" y2="1"><stop offset="0" stop-color="#fff"/><stop offset="0.55" stop-color="#f4f4f4"/><stop offset="0.56" stop-color="#dedede"/><stop offset="1" stop-color="#e6e6e6"/></linearGradient></defs><rect x="0.500" y="0.500" width="12" height="12" rx="1.500" fill="url(#eg)" stroke="#8e8e8e"/><path d="M2.500 6.500h8" stroke="#2a4fb0" stroke-width="1.300"/></svg>
<svg class="r" style="left:1686px;top:925px;" width="20" height="20" viewBox="0 0 20 20"><path d="M2 2h9v9h-9z M13 2h5v16h-16v-5h11z" fill="#e4e6ea" stroke="#4e525c" stroke-width="1.500"/></svg>
<span class="t" style="left:1712px;top:924.5px;font-size:15px;line-height:21px;color:#111;letter-spacing:-0.354px;">Families</span>
<svg class="r" style="left:1690.0px;top:952.0px;" width="13" height="13" viewBox="0 0 13 13"><defs><linearGradient id="eg" x1="0" y1="0" x2="0" y2="1"><stop offset="0" stop-color="#fff"/><stop offset="0.55" stop-color="#f4f4f4"/><stop offset="0.56" stop-color="#dedede"/><stop offset="1" stop-color="#e6e6e6"/></linearGradient></defs><rect x="0.500" y="0.500" width="12" height="12" rx="1.500" fill="url(#eg)" stroke="#8e8e8e"/><path d="M2.500 6.500h8" stroke="#2a4fb0" stroke-width="1.300"/></svg>
<div class="r" style="left:1704px;top:958px;width:11px;height:0px;border-top:1px dotted #8c8c8c;height:0;"></div>
<span class="t" style="left:1718px;top:946.5px;font-size:15px;line-height:21px;color:#111;letter-spacing:-0.023px;">Analytical Links</span>
<div class="r" style="left:1657px;top:966px;width:263px;height:22px;background:#f0f0f0;"></div>
<div class="r" style="left:1681px;top:973px;width:95px;height:6px;background:#858585;"></div>
<div class="r" style="left:0px;top:988px;width:1920px;height:32px;background:#cbcbcb;"></div>
<span class="t" style="left:3px;top:995.0px;font-size:15px;line-height:21px;color:#111;letter-spacing:-0.672px;">Ready</span>
<svg class="r" style="left:688px;top:992px;" width="24" height="24" viewBox="0 0 24 24"><g fill="#9a9a9a" stroke="#c4c4c4" stroke-width="0.800"><path d="M8 5c0-2.500 9-2.500 9 0v12h-9z"/><path d="M2 11c0-2.500 8-2.500 8 0v12h-8z"/><path d="M13 11c0-2.500 8-2.500 8 0v12h-8z"/></g><ellipse cx="12.500" cy="5" rx="3.500" ry="1.200" fill="#c8c8c8"/><ellipse cx="6" cy="11" rx="3" ry="1.100" fill="#c8c8c8"/><ellipse cx="17" cy="11" rx="3" ry="1.100" fill="#c8c8c8"/></svg>
<div class="r" style="left:717px;top:993px;width:233px;height:23px;background:#ffffff;"></div>
<div class="r" style="left:950px;top:993px;width:22px;height:23px;background:#d2d2d2;"></div>
<svg class="r" style="left:956px;top:1000px;" width="12" height="9" viewBox="0 0 12 9"><path d="M1.500 2l4.500 4.500 4.500-4.500" fill="none" stroke="#b0b0b0" stroke-width="1.200"/></svg>
<svg class="r" style="left:978px;top:993px;" width="24" height="24" viewBox="0 0 24 24"><path d="M6 3h13c2 0 2 6 0 6h-6v3h-3v-5h-4z" fill="#9a9a9a" stroke="#d8d8d8" stroke-width="0.800"/><path d="M8 13h5l1 4h-3l-2 5h-5l3-5z" fill="#9a9a9a"/></svg>
<span class="t" style="left:1004px;top:996.5px;font-size:14px;line-height:20px;color:#111;">:0</span>
<div class="r" style="left:1040px;top:995px;width:20px;height:20px;background:#9a9a9a;border-radius:2px;"></div>
<svg class="r" style="left:1068px;top:994px;" width="24" height="22" viewBox="0 0 24 22"><rect x="4" y="1" width="17" height="18" fill="#9a9a9a"/><path d="M1 13h9m-3-3.500l3.500 3.500-3.500 3.500" stroke="#e4e4e4" stroke-width="1.600" fill="none"/><path d="M10 19h11" stroke="#e4e4e4" stroke-width="1"/></svg>
<div class="r" style="left:1097px;top:993px;width:50px;height:23px;background:#f5f5f5;"></div>
<span class="t" style="left:1100px;top:995.0px;font-size:15px;line-height:21px;color:#8a8a8a;letter-spacing:0.371px;">Main</span>
<svg class="r" style="left:1640px;top:990px" width="200" height="30" viewBox="1640 990 200 30"><path d="M1645 996h5c3 0 3 8-1 8h-2l1 4h3v3h-3l1 4h-5l-1-4-3 2v-5l3-2z" fill="#9a9a9a"/><polygon points="1662,1008 1671,996 1682,996 1682,1000 1679,1002 1682,1004 1682,1015 1676,1012 1662,1012" fill="#9a9a9a"/><polygon points="1694,996 1704,996 1712,1007 1712,1015 1708,1011 1700,1011 1700,1015 1697,1015 1697,1010 1692,1010" fill="#9a9a9a"/><polygon points="1723,996 1742,996 1737,1001 1741,1004 1737,1008 1742,1015 1732,1011 1723,1015" fill="#9a9a9a"/><path d="M1753 1000h9M1757.500 995.500v9" fill="none" stroke="#a8a8a8" stroke-width="1.500" stroke-dasharray="2 1"/><path d="M1763 1001l8 6-3 1 2 5-2 1-2-5-3 2z" fill="#e2e2e2" stroke="#999" stroke-width="1"/><circle cx="1792" cy="1005" r="6.500" fill="none" stroke="#b2b2b2" stroke-width="3" stroke-dasharray="2.600 2.500"/><path d="M1810.500 996.500h19l-7.500 9v7.500h-4v-7.500z" fill="#dfe3e8" stroke="#4a4f58" stroke-width="1.300"/></svg>
<span class="t" style="left:1831px;top:996.0px;font-size:14px;line-height:20px;color:#111;">:1</span>
<div class="r" style="left:0px;top:1020px;width:1920px;height:60px;background:#1c212b;"></div>
<svg class="r" style="left:0;top:1020px" width="1920" height="60" viewBox="0 1020 1920 60"><defs><linearGradient id="wg" x1="0" y1="0" x2="1" y2="1"><stop offset="0" stop-color="#7ae3fc"/><stop offset="1" stop-color="#189bee"/></linearGradient></defs><path d="M27 1036h14v14h-14zM42 1036h14v14h-14zM27 1051h14v14h-14zM42 1051h14v14h-14z" fill="url(#wg)"/><defs><linearGradient id="gg" x1="0" y1="0" x2="0" y2="1"><stop offset="0" stop-color="#a9b0b8"/><stop offset="1" stop-color="#6f7780"/></linearGradient></defs><polygon points="94.5,1039.5 94.8,1036.0 99.2,1036.0 99.5,1039.5 102.6,1040.8 105.3,1038.5 108.5,1041.7 106.2,1044.4 107.5,1047.5 111.0,1047.8 111.0,1052.2 107.5,1052.5 106.2,1055.6 108.5,1058.3 105.3,1061.5 102.6,1059.2 99.5,1060.5 99.2,1064.0 94.8,1064.0 94.5,1060.5 91.4,1059.2 88.7,1061.5 85.5,1058.3 87.8,1055.6 86.5,1052.5 83.0,1052.2 83.0,1047.8 86.5,1047.5 87.8,1044.4 85.5,1041.7 88.7,1038.5 91.4,1040.8" fill="url(#gg)" stroke="url(#gg)" stroke-width="1.600" stroke-linejoin="round"/><circle cx="97" cy="1050" r="7.500" fill="#eef2f5"/><circle cx="97" cy="1050" r="5.300" fill="#1e6fd0"/><defs><linearGradient id="fg" x1="0" y1="0" x2="0" y2="1"><stop offset="0" stop-color="#ffe27a"/><stop offset="1" stop-color="#f6b92c"/></linearGradient></defs><path d="M137.500 1039c0-1 1-2 2-2h8l3 3h14c1.500 0 2.500 1 2.500 2v6h-30z" fill="#e9a513"/><rect x="137.500" y="1042" width="29.500" height="22" rx="2" fill="url(#fg)"/><rect x="143" y="1056" width="18.500" height="8" rx="1.500" fill="#1b74d8"/><rect x="146" y="1058.500" width="12.500" height="2" rx="1" fill="#5aa7f0"/><rect x="192" y="1035" width="30" height="30" fill="#27b0d9"/><path d="M201 1040l-3 18h5z" fill="#1b3f8a"/><path d="M203.500 1040v16.500h10.500" fill="none" stroke="#fff" stroke-width="3.400"/><circle cx="262" cy="1050" r="15" fill="#5865f2"/><path d="M253 1045c5-3 13-3 18 0c2 4 3 7 3 10c-3 2-5 3-6 3l-1.500-2.500c-3 1-6 1-9 0l-1.500 2.500c-1 0-3-1-6-3c0-3 1-6 3-10z" fill="#fff"/><circle cx="258.500" cy="1051" r="2.200" fill="#5865f2"/><circle cx="265.500" cy="1051" r="2.200" fill="#5865f2"/><defs><linearGradient id="sg" x1="0" y1="0" x2="0" y2="1"><stop offset="0" stop-color="#111d3f"/><stop offset="1" stop-color="#1a6fa0"/></linearGradient></defs><circle cx="317" cy="1050" r="14.500" fill="url(#sg)"/><circle cx="322.500" cy="1046" r="4.600" fill="none" stroke="#fff" stroke-width="2"/><circle cx="322.500" cy="1046" r="2" fill="#fff"/><path d="M302.500 1050l10 4.500c2-2 5-1.500 6-0.500l4-3.500-5-5-5 6" fill="#fff"/><circle cx="313" cy="1056" r="3.600" fill="#fff"/><circle cx="313" cy="1056" r="2" fill="#17538a"/><circle cx="372" cy="1050" r="15" fill="#1478e0"/><path d="M371 1040c7 4 9 14 3 20M362 1054c6 4 16 2 20-5M363 1046c5-4 15-2 19 6M372 1038c-4 6-4 16 2 23M361 1051c7-6 17-6 22 0" fill="none" stroke="#dff0ff" stroke-width="1.700"/><path d="M414.500 1035.500h25v23l-4 2h-17l-4-2z" fill="#0b0b0b"/><path d="M423 1061.500h8l-4 2z" fill="#fff"/><text x="417" y="1050" font-family="Liberation Sans" font-weight="bold" font-size="13" fill="#fff" textLength="20" lengthAdjust="spacingAndGlyphs">EPIC</text><text x="418.500" y="1057" font-family="Liberation Sans" font-weight="bold" font-size="5" fill="#fff" textLength="17" lengthAdjust="spacingAndGlyphs">GAMES</text><path d="M481.5 1049.6L469.5 1042.7A13.8 13.8 0 0 1 493.5 1042.7z" fill="#e23a2e"/><path d="M481.5 1049.6L493.5 1042.7A13.8 13.8 0 0 1 481.5 1063.4z" fill="#fcc21b"/><path d="M481.5 1049.6L481.5 1063.4A13.8 13.8 0 0 1 469.5 1042.7z" fill="#2da64c"/><path d="M481.5 1043.1h12.500a13.800 13.800 0 0 0-24.400 0z" fill="#e23a2e"/><circle cx="481.5" cy="1049.6" r="6.600" fill="#fff"/><circle cx="481.5" cy="1049.6" r="5.200" fill="#3b82f0"/><path d="M536.5 1049.6L524.5 1042.7A13.8 13.8 0 0 1 548.5 1042.7z" fill="#e23a2e"/><path d="M536.5 1049.6L548.5 1042.7A13.8 13.8 0 0 1 536.5 1063.4z" fill="#fcc21b"/><path d="M536.5 1049.6L536.5 1063.4A13.8 13.8 0 0 1 524.5 1042.7z" fill="#2da64c"/><path d="M536.5 1043.1h12.500a13.800 13.800 0 0 0-24.400 0z" fill="#e23a2e"/><circle cx="536.5" cy="1049.6" r="6.600" fill="#fff"/><circle cx="536.5" cy="1049.6" r="5.200" fill="#3b82f0"/><circle cx="493.200" cy="1038.300" r="9.500" fill="#5b4433"/><path d="M489 1043c2-4 6-5 10-2c1 3-1 6-4 7z" fill="#c9b49a"/><circle cx="490" cy="1034" r="3" fill="#6d5340"/><circle cx="547.600" cy="1039" r="10" fill="#3a3230"/><ellipse cx="546.500" cy="1039" rx="6.500" ry="8.500" fill="#d9cfc8"/><ellipse cx="547" cy="1040" rx="3.800" ry="4.800" fill="#e2b9a8"/><rect x="567.500" y="1025.500" width="49" height="49" rx="5" fill="#2b303b" stroke="#373c47" stroke-width="1"/><rect x="582" y="1070" width="20" height="3.500" rx="1.750" fill="#4cc2ff"/><path d="M578 1037l3-2v27l-3 0z" fill="#5b94ea"/><rect x="580.800" y="1035" width="22.700" height="23" fill="#1b66e0"/><path d="M603.500 1037l2.400 1v20h-2.400z" fill="#0f48b4"/><rect x="580.800" y="1057" width="25.100" height="7.700" fill="#0c3f9c"/><path d="M578 1062l2.800-1v3.700z" fill="#0a3280"/><text x="588" y="1052" font-family="Liberation Sans" font-weight="bold" font-size="15" fill="#fff">R</text><text x="586.500" y="1063.300" font-family="Liberation Sans" font-weight="bold" font-size="6.500" fill="#fff">RVT</text><defs><linearGradient id="edg" x1="0" y1="0" x2="1" y2="0"><stop offset="0" stop-color="#1a8fd8"/><stop offset="0.550" stop-color="#28b7c8"/><stop offset="1" stop-color="#5fd06a"/></linearGradient><linearGradient id="edg2" x1="0" y1="0" x2="0" y2="1"><stop offset="0" stop-color="#1c7fd0"/><stop offset="1" stop-color="#0d4f9c"/></linearGradient></defs><circle cx="647" cy="1050" r="15" fill="url(#edg)"/><path d="M632.500 1053c0-9 7-12 13-11c-5 2-7 6-6 11c1 6 6 10 12 9c-9 5-19 0-19-9z" fill="url(#edg2)"/><path d="M640 1052c1-6 9-8 14-4c3 3 2 7-2 8h9c-3 6-9 9-14 8c-5-1-8-6-7-12z" fill="#1568b8"/><path d="M647 1049c3-2 7-1 8 2c1 2-1 4-3 5h-7c-1-3 0-5 2-7z" fill="#1c212b"/><rect x="93.5" y="1070.500" width="7" height="3" rx="1.500" fill="#8f949c"/><rect x="148.5" y="1070.500" width="7" height="3" rx="1.500" fill="#8f949c"/><rect x="478.5" y="1070.500" width="7" height="3" rx="1.500" fill="#8f949c"/><rect x="533.5" y="1070.500" width="7" height="3" rx="1.500" fill="#8f949c"/><rect x="643.5" y="1070.500" width="7" height="3" rx="1.500" fill="#8f949c"/><path d="M1512 1055l8-8 8 8" fill="none" stroke="#fff" stroke-width="1.500"/><path d="M1543 1055c-4 0-4-6 0-6c1-4 7-5 9-1c4-1 6 6 1 7z" fill="#2a7fd8"/><circle cx="1556" cy="1056" r="4.500" fill="#fff" stroke="#2a7fd8" stroke-width="1"/><path d="M1574 1056c-4 0-5-6 0-7c1-5 8-6 10-1c5-1 7 7 1 8z" fill="#e6e6e6"/><path d="M1603 1046a8 8 0 0 1 14-2m2-4v5h-5M1619 1054a8 8 0 0 1-14 2m-2 4v-5h5" fill="none" stroke="#fff" stroke-width="1.400"/><circle cx="1616" cy="1056" r="4.500" fill="#f28a1c"/><path d="M1692 1047a12 12 0 0 1 18 0M1695 1050.500a8 8 0 0 1 12 0M1698 1054a4 4 0 0 1 6 0" fill="none" stroke="#fff" stroke-width="1.600"/><circle cx="1701" cy="1057" r="1.500" fill="#fff"/><path d="M1722 1047h4l5-4v14l-5-4h-4z" fill="none" stroke="#fff" stroke-width="1.400"/><path d="M1734 1046a5 5 0 0 1 0 8M1737 1043.500a9 9 0 0 1 0 13" fill="none" stroke="#fff" stroke-width="1.300"/><rect x="1754" y="1045" width="14" height="10" rx="2" fill="none" stroke="#fff" stroke-width="1.400"/><rect x="1756" y="1047" width="5" height="6" fill="#fff"/><rect x="1769" y="1048" width="2" height="4" fill="#fff"/><path d="M1753 1041v5M1756 1041v5M1752 1046h5v3h-5z" stroke="#fff" stroke-width="1.200" fill="#fff"/><circle cx="1885" cy="1050" r="10.500" fill="#4cc2ff"/></svg>
<span class="t" style="left:1639px;top:1040.0px;font-size:15px;line-height:21px;color:#fff;letter-spacing:-0.833px;">ENG</span>
<span class="t" style="left:1832px;top:1029.0px;font-size:15px;line-height:21px;color:#fff;letter-spacing:-0.709px;">01:05</span>
<span class="t" style="left:1790px;top:1049.0px;font-size:15px;line-height:21px;color:#fff;letter-spacing:0.091px;">13/05/2022</span>
<span class="t" style="left:1881px;top:1041.5px;font-size:12px;line-height:18px;color:#10202c;">3</span>
<div class="r" style="left:1136px;top:262px;width:506px;height:749px;background:#f0f0f0;border-radius:9px;box-shadow:0 0 0 1px rgba(120,120,120,0.55),0 6px 22px rgba(0,0,0,0.30),8px 0 14px rgba(0,0,0,0.10);"></div>
<div class="r" style="left:1136px;top:262px;width:506px;height:37px;background:#ffffff;border-radius:9px 9px 0 0;"></div>
<span class="t" style="left:1145.5px;top:269.5px;font-size:15px;line-height:21px;color:#9a9a9a;letter-spacing:-0.237px;">Type Properties</span>
<svg class="r" style="left:1614px;top:273px;" width="14" height="14" viewBox="0 0 14 14"><path d="M1 1l12 12M13 1l-12 12" stroke="#555" stroke-width="1.100"/></svg>
<span class="t" style="left:1161px;top:316.0px;font-size:13px;line-height:19px;color:#000;letter-spacing:0.016px;">Family:</span>
<div class="r" style="left:1242px;top:313px;width:249px;height:24px;background:#fbfbfb;border:1px solid #e4e4e4;border-bottom-color:#9a9a9a;border-radius:3px;box-sizing:border-box;"></div><span class="t" style="left:1246px;top:315.5px;font-size:13px;line-height:19px;color:#000;letter-spacing:-0.029px;">System Family: Curtain Wall</span><svg class="r" style="left:1476px;top:321.0px;" width="12" height="9" viewBox="0 0 12 9"><path d="M1.500 2l4.500 4.500 4.500-4.500" fill="none" stroke="#333" stroke-width="1.100"/></svg>
<div class="r" style="left:1505px;top:314px;width:124px;height:28px;background:#f5f5f5;border:1px solid #e3e3e3;border-radius:4px;box-sizing:border-box;"></div><span class="t" style="left:1547px;top:319.0px;font-size:13px;line-height:19px;color:#9d9d9d;letter-spacing:-0.109px;">Load...</span>
<span class="t" style="left:1161px;top:356.0px;font-size:13px;line-height:19px;color:#000;letter-spacing:0.241px;">Type:</span>
<div class="r" style="left:1242px;top:353px;width:249px;height:24px;background:#fbfbfb;border:1px solid #e4e4e4;border-bottom-color:#9a9a9a;border-radius:3px;box-sizing:border-box;"></div><span class="t" style="left:1246px;top:355.5px;font-size:13px;line-height:19px;color:#000;letter-spacing:-0.052px;">ms balustrade</span><svg class="r" style="left:1476px;top:361.0px;" width="12" height="9" viewBox="0 0 12 9"><path d="M1.500 2l4.500 4.500 4.500-4.500" fill="none" stroke="#333" stroke-width="1.100"/></svg>
<div class="r" style="left:1505px;top:352px;width:124px;height:28px;background:#fdfdfd;border:1px solid #d0d0d0;border-bottom-color:#b8b8b8;border-radius:4px;box-sizing:border-box;"></div><span class="t" style="left:1535px;top:357.0px;font-size:13px;line-height:19px;color:#000;letter-spacing:-0.087px;">Duplicate...</span>
<div class="r" style="left:1505px;top:390px;width:124px;height:28px;background:#fdfdfd;border:1px solid #d0d0d0;border-bottom-color:#b8b8b8;border-radius:4px;box-sizing:border-box;"></div><span class="t" style="left:1537px;top:395.0px;font-size:13px;line-height:19px;color:#000;letter-spacing:-0.109px;">Rename...</span>
<span class="t" style="left:1161px;top:426.0px;font-size:13px;line-height:19px;color:#000;letter-spacing:-0.067px;">Type Parameters</span>
<div class="r" style="left:1161px;top:451px;width:467px;height:462px;background:#ffffff;border:1px solid #8a8a8a;border-right-color:#e0e0e0;border-bottom-color:#e4e4e4;box-sizing:border-box;"></div>
<div class="r" style="left:1604px;top:453px;width:23px;height:459px;background:#f0f0f0;"></div>
<div class="r" style="left:1613px;top:474px;width:6px;height:60px;background:#7f7f7f;"></div>
<div class="r" style="left:1163px;top:453px;width:441px;height:28px;background:#f0f0f0;border-bottom:1px solid #222;box-sizing:border-box;"></div>
<div class="r" style="left:1364px;top:453px;width:1px;height:28px;background:#222;"></div>
<div class="r" style="left:1588px;top:453px;width:1px;height:28px;background:#222;"></div>
<div class="r" style="left:1603px;top:453px;width:1px;height:28px;background:#222;"></div>
<span class="t" style="left:1230px;top:455.5px;font-size:15px;line-height:21px;color:#000;letter-spacing:-0.227px;">Parameter</span>
<span class="t" style="left:1459px;top:455.5px;font-size:15px;line-height:21px;color:#000;letter-spacing:-0.050px;">Value</span>
<span class="t" style="left:1592px;top:457.0px;font-size:13px;line-height:19px;color:#000;">=</span>
<div class="r" style="left:1163px;top:484px;width:441px;height:26px;background:#9ab4d3;"></div><span class="t" style="left:1165px;top:486.0px;font-size:15px;line-height:21px;color:#000;letter-spacing:-0.276px;font-weight:bold;">Construction</span><svg class="r" style="left:1589px;top:485.5px;" width="10" height="14" viewBox="0 0 10 14"><path d="M2 6l3-3 3 3M2 11l3-3 3 3" fill="none" stroke="#111" stroke-width="1.4"/></svg>
<div class="r" style="left:1163px;top:763px;width:441px;height:25px;background:#9ab4d3;"></div><span class="t" style="left:1165px;top:764.5px;font-size:15px;line-height:21px;color:#000;letter-spacing:-0.156px;font-weight:bold;">Horizontal Grid</span><svg class="r" style="left:1589px;top:764.0px;" width="10" height="14" viewBox="0 0 10 14"><path d="M2 6l3-3 3 3M2 11l3-3 3 3" fill="none" stroke="#111" stroke-width="1.4"/></svg>
<span class="t" style="left:1165px;top:789.0px;font-size:15px;line-height:21px;color:#000;letter-spacing:-0.174px;">Layout</span><span class="t" style="left:1367px;top:789.0px;font-size:15px;line-height:21px;color:#000;letter-spacing:0.035px;">None</span><div class="r" style="left:1163px;top:812px;width:441px;height:0px;border-top:1px dotted #777;height:0;"></div><div class="r" style="left:1364px;top:788px;width:0px;height:24px;border-left:1px dotted #777;width:0;"></div><div class="r" style="left:1588px;top:788px;width:0px;height:24px;border-left:1px dotted #777;width:0;"></div><div class="r" style="left:1603px;top:788px;width:0px;height:24px;border-left:1px dotted #777;width:0;"></div>
<span class="t" style="left:1165px;top:813.0px;font-size:15px;line-height:21px;color:#7b7b7b;letter-spacing:-0.172px;">Spacing</span><div class="r" style="left:1163px;top:836px;width:441px;height:0px;border-top:1px dotted #777;height:0;"></div><div class="r" style="left:1364px;top:812px;width:0px;height:24px;border-left:1px dotted #777;width:0;"></div><div class="r" style="left:1588px;top:812px;width:0px;height:24px;border-left:1px dotted #777;width:0;"></div><div class="r" style="left:1603px;top:812px;width:0px;height:24px;border-left:1px dotted #777;width:0;"></div>
<span class="t" style="left:1165px;top:837.0px;font-size:15px;line-height:21px;color:#7b7b7b;letter-spacing:0.069px;">Adjust for Mullion Size</span><svg class="r" style="left:1368px;top:840px;" width="16" height="16" viewBox="0 0 16 16"><rect x="0.7" y="0.7" width="14.600" height="14.600" rx="3" fill="#fdfdfd" stroke="#b5b5b5" stroke-width="1.2"/></svg><div class="r" style="left:1163px;top:860px;width:441px;height:0px;border-top:1px dotted #777;height:0;"></div><div class="r" style="left:1364px;top:836px;width:0px;height:24px;border-left:1px dotted #777;width:0;"></div><div class="r" style="left:1588px;top:836px;width:0px;height:24px;border-left:1px dotted #777;width:0;"></div><div class="r" style="left:1603px;top:836px;width:0px;height:24px;border-left:1px dotted #777;width:0;"></div>
<div class="r" style="left:1163px;top:864px;width:441px;height:26px;background:#9ab4d3;"></div><span class="t" style="left:1165px;top:866.0px;font-size:15px;line-height:21px;color:#000;letter-spacing:-0.082px;font-weight:bold;">Vertical Mullions</span><svg class="r" style="left:1589px;top:865.5px;" width="10" height="14" viewBox="0 0 10 14"><path d="M2 6l3-3 3 3M2 11l3-3 3 3" fill="none" stroke="#111" stroke-width="1.4"/></svg>
<span class="t" style="left:1165px;top:890.0px;font-size:15px;line-height:21px;color:#000;letter-spacing:0.067px;">Interior Type</span><span class="t" style="left:1367px;top:890.0px;font-size:15px;line-height:21px;color:#000;letter-spacing:0.035px;">None</span><div class="r" style="left:1163px;top:913px;width:441px;height:0px;border-top:1px dotted #777;height:0;"></div><div class="r" style="left:1364px;top:889px;width:0px;height:24px;border-left:1px dotted #777;width:0;"></div><div class="r" style="left:1588px;top:889px;width:0px;height:24px;border-left:1px dotted #777;width:0;"></div><div class="r" style="left:1603px;top:889px;width:0px;height:24px;border-left:1px dotted #777;width:0;"></div>
<div class="r" style="left:1162px;top:912px;width:442px;height:2px;background:#f0f0f0;"></div>
<span class="t" style="left:1161px;top:928.0px;font-size:13px;line-height:19px;color:#0a5bd0;letter-spacing:-0.057px;text-decoration:underline;">What do these properties do?</span>
<div class="r" style="left:1161px;top:968px;width:102px;height:28px;background:#f5f5f5;border:1px solid #e3e3e3;border-radius:4px;box-sizing:border-box;"></div><span class="t" style="left:1179px;top:973.0px;font-size:13px;line-height:19px;color:#9d9d9d;letter-spacing:0.095px;">&lt;&lt; Preview</span>
<div class="r" style="left:1302px;top:968px;width:103px;height:28px;background:#fdfdfd;border:1px solid #d0d0d0;border-bottom-color:#b8b8b8;border-radius:4px;box-sizing:border-box;"></div><span class="t" style="left:1345px;top:973.0px;font-size:13px;line-height:19px;color:#000;letter-spacing:-1.200px;">OK</span>
<div class="r" style="left:1414px;top:968px;width:103px;height:28px;background:#fdfdfd;border:1px solid #d0d0d0;border-bottom-color:#b8b8b8;border-radius:4px;box-sizing:border-box;"></div><span class="t" style="left:1446px;top:973.0px;font-size:13px;line-height:19px;color:#000;letter-spacing:-0.414px;">Cancel</span>
<div class="r" style="left:1526px;top:968px;width:103px;height:28px;background:#fdfdfd;border:1px solid #d0d0d0;border-bottom-color:#b8b8b8;border-radius:4px;box-sizing:border-box;"></div><span class="t" style="left:1562px;top:973.0px;font-size:13px;line-height:19px;color:#000;letter-spacing:-0.306px;">Apply</span>
<svg class="r" style="left:1628px;top:998px;" width="11" height="11" viewBox="0 0 11 11"><rect x="8" y="0" width="2" height="2" fill="#bdbdbd"/><rect x="4" y="4" width="2" height="2" fill="#bdbdbd"/><rect x="8" y="4" width="2" height="2" fill="#bdbdbd"/><rect x="0" y="8" width="2" height="2" fill="#bdbdbd"/><rect x="4" y="8" width="2" height="2" fill="#bdbdbd"/><rect x="8" y="8" width="2" height="2" fill="#bdbdbd"/></svg>
<div class="r" style="left:1126px;top:512px;width:527px;height:249px;background:#f0f0f0;border-radius:9px;box-shadow:0 0 0 1px rgba(110,110,110,0.6),0 6px 22px rgba(0,0,0,0.28),7px 2px 12px rgba(0,0,0,0.22);"></div>
<div class="r" style="left:1126px;top:512px;width:527px;height:37px;background:#ffffff;border-radius:9px 9px 0 0;"></div>
<span class="t" style="left:1135px;top:519.5px;font-size:16px;line-height:22px;color:#111;letter-spacing:-0.672px;">Autodesk Revit 2023</span>
<div class="r" style="left:1138px;top:557px;width:502px;height:135px;border:1px solid #dcdcdc;box-sizing:border-box;"></div>
<div class="r" style="left:1144px;top:550px;width:369px;height:14px;background:#f0f0f0;"></div>
<span class="t" style="left:1147px;top:548.0px;font-size:13px;line-height:19px;color:#000;letter-spacing:0.018px;">Error - cannot be ignored</span>
<span class="t" style="left:1336px;top:548.0px;font-size:13px;line-height:19px;color:#000;letter-spacing:0.672px;">--</span>
<span class="t" style="left:1390px;top:548.0px;font-size:13px;line-height:19px;color:#000;letter-spacing:0.063px;">2 Errors, 0 Warnings</span>
<div class="r" style="left:1149px;top:570px;width:480px;height:77px;background:#ffffff;border:1px solid #e6e6e6;border-bottom:1px solid #8a8a8a;box-sizing:border-box;"></div>
<div class="r" style="left:1609px;top:571px;width:19px;height:75px;background:#f4f4f4;"></div>
<span class="t" style="left:1155px;top:571.0px;font-size:13px;line-height:19px;color:#000;letter-spacing:0.037px;">Can&#x27;t make type &quot;perforated balustrade rfa&quot;.</span>
<svg class="r" style="left:1612px;top:577px;" width="10" height="8" viewBox="0 0 10 8"><polygon points="5,1 9.500,7 0.500,7" fill="#a8a8a8"/></svg>
<svg class="r" style="left:1612px;top:630px;" width="10" height="8" viewBox="0 0 10 8"><polygon points="5,7 9.500,1 0.500,1" fill="#a8a8a8"/></svg>
<div class="r" style="left:1150px;top:655px;width:30px;height:25px;background:#f5f5f5;border:1px solid #e3e3e3;border-radius:4px;box-sizing:border-box;"></div><span class="t" style="left:1156px;top:658.5px;font-size:13px;line-height:19px;color:#9d9d9d;letter-spacing:0.906px;">&lt;&lt;</span>
<span class="t" style="left:1215px;top:658.0px;font-size:13px;line-height:19px;color:#000;letter-spacing:0.078px;">1 of 2</span>
<div class="r" style="left:1288px;top:655px;width:30px;height:25px;background:#fdfdfd;border:1px solid #d0d0d0;border-bottom-color:#b8b8b8;border-radius:4px;box-sizing:border-box;"></div><span class="t" style="left:1294px;top:658.5px;font-size:13px;line-height:19px;color:#000;letter-spacing:0.906px;">&gt;&gt;</span>
<div class="r" style="left:1327px;top:655px;width:93px;height:25px;background:#f5f5f5;border:1px solid #e3e3e3;border-radius:4px;box-sizing:border-box;"></div><span class="t" style="left:1357px;top:658.5px;font-size:13px;line-height:19px;color:#9d9d9d;letter-spacing:-0.133px;">Show</span>
<div class="r" style="left:1428px;top:655px;width:86px;height:25px;background:#f5f5f5;border:1px solid #e3e3e3;border-radius:4px;box-sizing:border-box;"></div><span class="t" style="left:1443px;top:658.5px;font-size:13px;line-height:19px;color:#9d9d9d;letter-spacing:0.009px;">More Info</span>
<div class="r" style="left:1523px;top:655px;width:107px;height:25px;background:#fdfdfd;border:1px solid #d0d0d0;border-bottom-color:#b8b8b8;border-radius:4px;box-sizing:border-box;"></div><span class="t" style="left:1545px;top:658.5px;font-size:13px;line-height:19px;color:#000;letter-spacing:0.010px;">Expand &gt;&gt;</span>
<span class="t" style="left:1138px;top:694.0px;font-size:13px;line-height:19px;color:#000;letter-spacing:-0.048px;">Resolve First Error:</span>
<div class="r" style="left:1139px;top:722px;width:191px;height:26px;background:#fdfdfd;border:1px solid #d0d0d0;border-bottom-color:#b8b8b8;border-radius:4px;box-sizing:border-box;"></div><span class="t" style="left:1200px;top:726.0px;font-size:13px;line-height:19px;color:#000;letter-spacing:-0.105px;">Delete Type</span>
<div class="r" style="left:1425px;top:721px;width:103px;height:27px;background:#f5f5f5;border:1px solid #e3e3e3;border-radius:4px;box-sizing:border-box;"></div><span class="t" style="left:1468px;top:725.5px;font-size:13px;line-height:19px;color:#9d9d9d;letter-spacing:-1.200px;">OK</span>
<div class="r" style="left:1537px;top:720px;width:103px;height:28px;background:#fdfdfd;border:2px solid #0a5fc4;border-radius:4px;box-sizing:border-box;"></div><span class="t" style="left:1569px;top:725.0px;font-size:13px;line-height:19px;color:#000;letter-spacing:-0.414px;">Cancel</span>
</body></html>
